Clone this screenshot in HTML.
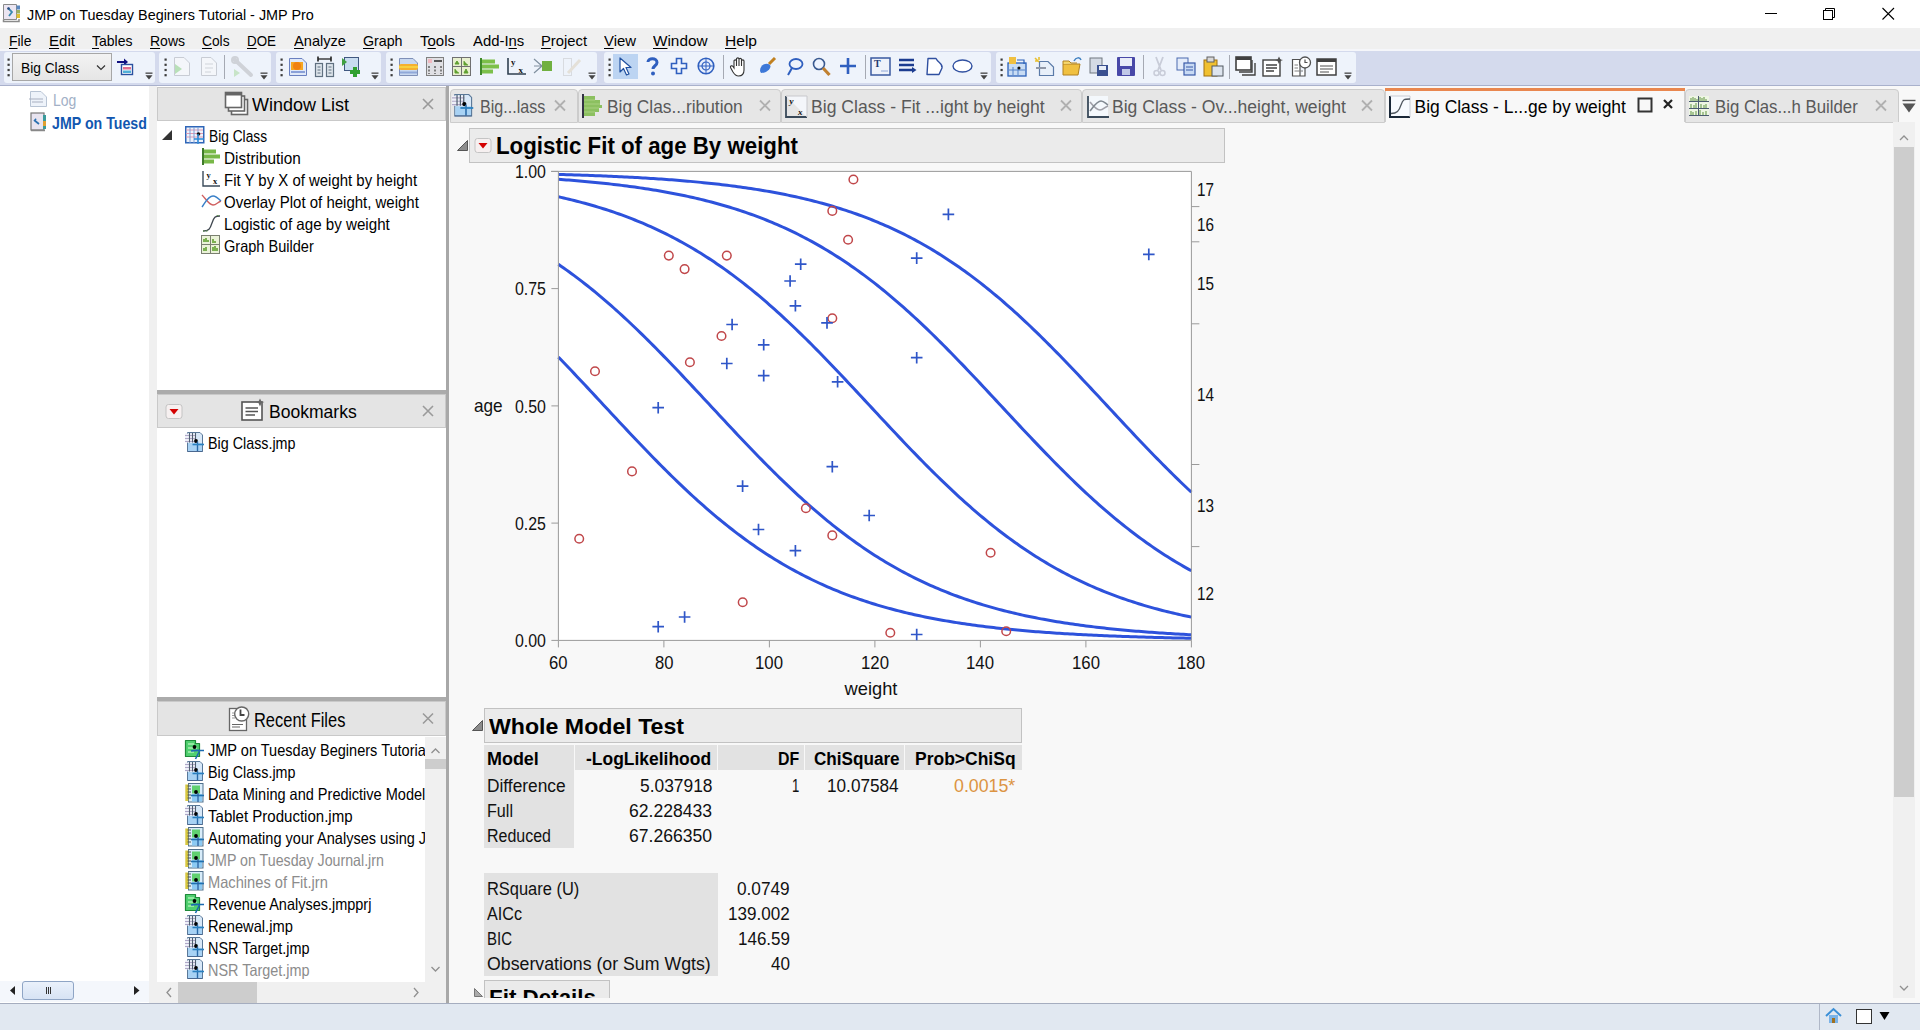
<!DOCTYPE html><html><head><meta charset="utf-8"><style>
html,body{margin:0;padding:0;}
body{width:1920px;height:1030px;position:relative;overflow:hidden;background:#f8f8f8;font-family:"Liberation Sans",sans-serif;}
.t{position:absolute;white-space:nowrap;line-height:normal;transform-origin:0 0;font-family:"Liberation Sans",sans-serif;}
.t u{text-decoration:underline;text-underline-offset:2px;text-decoration-thickness:1px;}
svg{position:absolute;overflow:visible;}
</style></head><body>
<div style="position:absolute;left:0px;top:0px;width:1920px;height:28px;background:#fff;"></div>
<div class="t" style="left:27.00px;top:5.92px;font-size:15.55px;color:#000;transform:scaleX(0.9265);">JMP on Tuesday Beginers Tutorial - JMP Pro</div>
<svg style="left:0;top:0" width="1920" height="28"><line x1="1765" y1="13.5" x2="1777" y2="13.5" stroke="#000" stroke-width="1"/><rect x="1823.5" y="10.5" width="9" height="9" fill="none" stroke="#000" stroke-width="1"/><path d="M1825.5 10.5 V8.5 H1834.5 V17.5 H1832.5" fill="none" stroke="#000" stroke-width="1"/><path d="M1882.5 8 L1894 19.5 M1894 8 L1882.5 19.5" stroke="#000" stroke-width="1.1"/></svg>
<svg style="left:0;top:0" width="24" height="24"><path d="M3.5 4.5 H16.5 V19.5 H3.5 Z" fill="#ece6f2" stroke="#8a8a8a" stroke-width="1"/><path d="M3.5 19.5 V21.5 H19 V19" fill="none" stroke="#8a8a8a" stroke-width="1.5"/><rect x="16.5" y="5.5" width="3.5" height="4" fill="#5a88c0"/><rect x="16.5" y="10" width="3.5" height="3.5" fill="#9ab060"/><rect x="16.5" y="14" width="3.5" height="4" fill="#e0c030"/><path d="M8 8 L12 12 L9 16" stroke="#3a8ab0" stroke-width="1.8" fill="none"/><circle cx="8.5" cy="8.5" r="1.3" fill="#2a4a80"/></svg>
<div style="position:absolute;left:0px;top:28px;width:1920px;height:23px;background:#f0f0f0;"></div>
<div style="position:absolute;left:0px;top:49px;width:1920px;height:2px;background:#f5f6fa;"></div>
<div class="t" style="left:9.30px;top:32.22px;font-size:15.55px;color:#000;transform:scaleX(0.8958);"><u>F</u>ile</div>
<div class="t" style="left:49.00px;top:32.22px;font-size:15.55px;color:#000;transform:scaleX(0.9701);"><u>E</u>dit</div>
<div class="t" style="left:92.00px;top:32.22px;font-size:15.55px;color:#000;transform:scaleX(0.9008);"><u>T</u>ables</div>
<div class="t" style="left:150.00px;top:32.22px;font-size:15.55px;color:#000;transform:scaleX(0.9000);"><u>R</u>ows</div>
<div class="t" style="left:202.00px;top:32.22px;font-size:15.55px;color:#000;transform:scaleX(0.8839);"><u>C</u>ols</div>
<div class="t" style="left:247.00px;top:32.22px;font-size:15.55px;color:#000;transform:scaleX(0.8605);"><u>D</u>OE</div>
<div class="t" style="left:294.00px;top:32.22px;font-size:15.55px;color:#000;transform:scaleX(0.9398);"><u>A</u>nalyze</div>
<div class="t" style="left:363.00px;top:32.22px;font-size:15.55px;color:#000;transform:scaleX(0.9138);"><u>G</u>raph</div>
<div class="t" style="left:420.00px;top:32.22px;font-size:15.55px;color:#000;transform:scaleX(0.9640);">T<u>o</u>ols</div>
<div class="t" style="left:472.70px;top:32.22px;font-size:15.55px;color:#000;transform:scaleX(0.9571);">Add-I<u>n</u>s</div>
<div class="t" style="left:541.00px;top:32.22px;font-size:15.55px;color:#000;transform:scaleX(0.9503);"><u>P</u>roject</div>
<div class="t" style="left:604.00px;top:32.22px;font-size:15.55px;color:#000;transform:scaleX(0.9572);"><u>V</u>iew</div>
<div class="t" style="left:653.00px;top:32.22px;font-size:15.55px;color:#000;transform:scaleX(0.9852);"><u>W</u>indow</div>
<div class="t" style="left:725.00px;top:32.22px;font-size:15.55px;color:#000;"><u>H</u>elp</div>
<div style="position:absolute;left:0px;top:51px;width:1920px;height:34px;background:#d4daed;"></div>
<div style="position:absolute;left:0px;top:85px;width:1920px;height:1px;background:#a9b1cc;"></div>
<div style="position:absolute;left:4px;top:52px;width:151px;height:31px;background:#eef3fb;border-radius:3px;"></div>
<div style="position:absolute;left:159px;top:52px;width:112px;height:31px;background:#eef3fb;border-radius:3px;"></div>
<div style="position:absolute;left:276px;top:52px;width:105px;height:31px;background:#eef3fb;border-radius:3px;"></div>
<div style="position:absolute;left:386px;top:52px;width:211px;height:31px;background:#eef3fb;border-radius:3px;"></div>
<div style="position:absolute;left:604px;top:52px;width:387px;height:31px;background:#eef3fb;border-radius:3px;"></div>
<div style="position:absolute;left:996px;top:52px;width:360px;height:31px;background:#eef3fb;border-radius:3px;"></div>
<div style="position:absolute;left:0px;top:86px;width:149px;height:917px;background:#fff;"></div>
<div style="position:absolute;left:149px;top:86px;width:8px;height:917px;background:#f0f0f0;"></div>
<div class="t" style="left:52.70px;top:90.87px;font-size:16.28px;color:#a2b0c6;transform:scaleX(0.8578);">Log</div>
<div class="t" style="left:52.00px;top:112.88px;font-size:17.15px;color:#1257b0;font-weight:bold;transform:scaleX(0.8284);">JMP on Tuesd</div>
<div style="position:absolute;left:0px;top:981px;width:149px;height:21px;background:#f4f7fc;"></div>
<div style="position:absolute;left:22px;top:981px;width:52px;height:19px;background:linear-gradient(#eaf1fb,#d7e3f4);border:1px solid #8fa5c5;border-radius:3px;box-sizing:border-box;"></div>
<svg style="left:0;top:980" width="149" height="22"><path d="M10 10.5 L15 6 L15 15 Z" fill="#222"/><path d="M139.5 10.5 L134 6 L134 15 Z" fill="#222"/><path d="M46.5 7 V14 M48.5 7 V14 M50.5 7 V14" stroke="#333" stroke-width="1"/></svg>
<div style="position:absolute;left:446px;top:86px;width:3px;height:917px;background:#a8a8a8;"></div>
<div style="position:absolute;left:157px;top:86px;width:289px;height:305px;background:#fff;"></div>
<div style="position:absolute;left:157px;top:87px;width:289px;height:34px;background:#e4e4e4;border:1px solid #c9c9c9;box-sizing:border-box;"></div>
<div class="t" style="left:252.00px;top:93.96px;font-size:18.60px;color:#000;transform:scaleX(0.9672);">Window List</div>
<svg style="left:420px;top:87px" width="20" height="34"><path d="M3 12.0 L13 22.0 M13 12.0 L3 22.0" stroke="#9a9a9a" stroke-width="1.6"/></svg>
<div class="t" style="left:208.60px;top:127.14px;font-size:16.42px;color:#000;transform:scaleX(0.8375);">Big Class</div>
<div class="t" style="left:223.80px;top:149.27px;font-size:16.28px;color:#000;transform:scaleX(0.9444);">Distribution</div>
<div class="t" style="left:223.80px;top:171.27px;font-size:16.28px;color:#000;transform:scaleX(0.9189);">Fit Y by X of weight by height</div>
<div class="t" style="left:223.80px;top:193.27px;font-size:16.28px;color:#000;transform:scaleX(0.9209);">Overlay Plot of height, weight</div>
<div class="t" style="left:223.80px;top:215.27px;font-size:16.28px;color:#000;transform:scaleX(0.9306);">Logistic of age by weight</div>
<div class="t" style="left:223.80px;top:237.27px;font-size:16.28px;color:#000;transform:scaleX(0.8940);">Graph Builder</div>
<svg style="left:160px;top:128px" width="14" height="14"><path d="M2 12 L12 12 L12 2 Z" fill="#333"/></svg>
<div style="position:absolute;left:157px;top:390px;width:289px;height:4px;background:#ababab;"></div>
<div style="position:absolute;left:157px;top:394px;width:289px;height:309px;background:#fff;"></div>
<div style="position:absolute;left:157px;top:394px;width:289px;height:34px;background:#e4e4e4;border:1px solid #c9c9c9;box-sizing:border-box;"></div>
<div class="t" style="left:269.00px;top:400.90px;font-size:18.90px;color:#000;transform:scaleX(0.9280);">Bookmarks</div>
<svg style="left:420px;top:394px" width="20" height="34"><path d="M3 12.0 L13 22.0 M13 12.0 L3 22.0" stroke="#9a9a9a" stroke-width="1.6"/></svg>
<svg style="left:164px;top:403px" width="22" height="18"><rect x="2" y="1.5" width="16" height="14" rx="2.5" fill="#f6f0f0" stroke="#c4c4c4" stroke-width="1"/><path d="M5.5 6 L14.5 6 L10 11.5 Z" fill="#d40000"/></svg>
<div class="t" style="left:208.30px;top:435.33px;font-size:15.99px;color:#000;transform:scaleX(0.8952);">Big Class.jmp</div>
<div style="position:absolute;left:157px;top:697px;width:289px;height:4px;background:#ababab;"></div>
<div style="position:absolute;left:157px;top:701px;width:289px;height:302px;background:#fff;"></div>
<div style="position:absolute;left:157px;top:701px;width:289px;height:35px;background:#e4e4e4;border:1px solid #c9c9c9;box-sizing:border-box;"></div>
<div class="t" style="left:254.00px;top:709.50px;font-size:19.33px;color:#000;transform:scaleX(0.8507);">Recent Files</div>
<svg style="left:420px;top:701px" width="20" height="35"><path d="M3 12.5 L13 22.5 M13 12.5 L3 22.5" stroke="#9a9a9a" stroke-width="1.6"/></svg>
<div style="position:absolute;left:157px;top:737px;width:268px;height:245px;overflow:hidden;">
<div class="t" style="left:50.70px;top:3.87px;font-size:16.72px;color:#000;transform:scaleX(0.8700);">JMP on Tuesday Beginers Tutorial.jrn</div>
<div class="t" style="left:50.70px;top:25.87px;font-size:16.72px;color:#000;transform:scaleX(0.8563);">Big Class.jmp</div>
<div class="t" style="left:50.70px;top:47.87px;font-size:16.72px;color:#000;transform:scaleX(0.8700);">Data Mining and Predictive Modeling.jrn</div>
<div class="t" style="left:50.70px;top:69.87px;font-size:16.72px;color:#000;transform:scaleX(0.9002);">Tablet Production.jmp</div>
<div class="t" style="left:50.70px;top:91.87px;font-size:16.72px;color:#000;transform:scaleX(0.8700);">Automating your Analyses using JSL.jrn</div>
<div class="t" style="left:50.70px;top:113.87px;font-size:16.72px;color:#8c8c8c;transform:scaleX(0.8507);">JMP on Tuesday Journal.jrn</div>
<div class="t" style="left:50.70px;top:135.87px;font-size:16.72px;color:#8c8c8c;transform:scaleX(0.8780);">Machines of Fit.jrn</div>
<div class="t" style="left:50.70px;top:157.87px;font-size:16.72px;color:#000;transform:scaleX(0.8668);">Revenue Analyses.jmpprj</div>
<div class="t" style="left:50.70px;top:179.87px;font-size:16.72px;color:#000;transform:scaleX(0.8787);">Renewal.jmp</div>
<div class="t" style="left:50.70px;top:201.87px;font-size:16.72px;color:#000;transform:scaleX(0.8643);">NSR Target.jmp</div>
<div class="t" style="left:50.70px;top:223.87px;font-size:16.72px;color:#8c8c8c;transform:scaleX(0.8643);">NSR Target.jmp</div>
</div>
<div style="position:absolute;left:425px;top:737px;width:21px;height:245px;background:#f0f0f0;"></div>
<div style="position:absolute;left:425px;top:759px;width:21px;height:10px;background:#cdcdcd;"></div>
<svg style="left:425px;top:737px" width="21" height="245"><path d="M6.5 16 L10.5 12 L14.5 16" stroke="#909090" stroke-width="1.3" fill="none"/><path d="M6.5 230 L10.5 234 L14.5 230" stroke="#909090" stroke-width="1.3" fill="none"/></svg>
<div style="position:absolute;left:157px;top:982px;width:289px;height:21px;background:#f0f0f0;"></div>
<div style="position:absolute;left:178px;top:982px;width:79px;height:21px;background:#cdcdcd;"></div>
<svg style="left:157px;top:982px" width="289" height="21"><path d="M14 6 L10 10.5 L14 15" stroke="#909090" stroke-width="1.3" fill="none"/><path d="M257 6 L261 10.5 L257 15" stroke="#909090" stroke-width="1.3" fill="none"/></svg>
<div style="position:absolute;left:449px;top:86px;width:1471px;height:36px;background:#f8f8f8;"></div>
<div style="position:absolute;left:450px;top:89px;width:128px;height:34px;background:#e6e6e6;border:1px solid #cccccc;border-radius:4px 4px 0 0;box-sizing:border-box;"></div>
<div class="t" style="left:479.50px;top:96.91px;font-size:17.44px;color:#595959;transform:scaleX(0.9228);">Big...lass</div>
<svg style="left:553px;top:90px" width="16" height="30"><path d="M2 10.5 L12 20.5 M12 10.5 L2 20.5" stroke="#b0b0b0" stroke-width="1.8"/></svg>
<div style="position:absolute;left:578px;top:89px;width:203px;height:34px;background:#e6e6e6;border:1px solid #cccccc;border-radius:4px 4px 0 0;box-sizing:border-box;"></div>
<div class="t" style="left:606.70px;top:96.91px;font-size:17.44px;color:#595959;transform:scaleX(0.9934);">Big Clas...ribution</div>
<svg style="left:758px;top:90px" width="16" height="30"><path d="M2 10.5 L12 20.5 M12 10.5 L2 20.5" stroke="#b0b0b0" stroke-width="1.8"/></svg>
<div style="position:absolute;left:781px;top:89px;width:301px;height:34px;background:#e6e6e6;border:1px solid #cccccc;border-radius:4px 4px 0 0;box-sizing:border-box;"></div>
<div class="t" style="left:810.60px;top:96.91px;font-size:17.44px;color:#595959;transform:scaleX(1.0087);">Big Class - Fit ...ight by height</div>
<svg style="left:1059px;top:90px" width="16" height="30"><path d="M2 10.5 L12 20.5 M12 10.5 L2 20.5" stroke="#b0b0b0" stroke-width="1.8"/></svg>
<div style="position:absolute;left:1082px;top:89px;width:303px;height:34px;background:#e6e6e6;border:1px solid #cccccc;border-radius:4px 4px 0 0;box-sizing:border-box;"></div>
<div class="t" style="left:1111.50px;top:96.91px;font-size:17.44px;color:#595959;transform:scaleX(1.0072);">Big Class - Ov...height, weight</div>
<svg style="left:1360px;top:90px" width="16" height="30"><path d="M2 10.5 L12 20.5 M12 10.5 L2 20.5" stroke="#b0b0b0" stroke-width="1.8"/></svg>
<div style="position:absolute;left:1385px;top:88px;width:300px;height:34px;background:#f8f8f8;border-left:1px solid #cfcfcf;border-right:1px solid #cfcfcf;box-sizing:border-box;"></div>
<div style="position:absolute;left:1385px;top:88px;width:300px;height:3px;background:#e9874f;"></div>
<div class="t" style="left:1414.60px;top:96.91px;font-size:17.44px;color:#000;">Big Class - L...ge by weight</div>
<svg style="left:1630px;top:90px" width="50" height="30"><rect x="8.5" y="8.5" width="13" height="13" fill="none" stroke="#333" stroke-width="2"/><path d="M34 10 L42 18 M42 10 L34 18" stroke="#222" stroke-width="2.2"/></svg>
<div style="position:absolute;left:1685px;top:89px;width:214px;height:34px;background:#e6e6e6;border:1px solid #cccccc;border-radius:4px 4px 0 0;box-sizing:border-box;"></div>
<div class="t" style="left:1715.00px;top:96.91px;font-size:17.44px;color:#595959;transform:scaleX(0.9627);">Big Clas...h Builder</div>
<svg style="left:1874px;top:90px" width="16" height="30"><path d="M2 10.5 L12 20.5 M12 10.5 L2 20.5" stroke="#b0b0b0" stroke-width="1.8"/></svg>
<svg style="left:1900px;top:98px" width="18" height="18"><path d="M2.5 2.5 H15.5" stroke="#555" stroke-width="1.4"/><path d="M2.5 5.5 H15.5 L9 14.5 Z" fill="#555"/></svg>
<div style="position:absolute;left:1893px;top:122px;width:22px;height:876px;background:#f0f0f0;"></div>
<div style="position:absolute;left:1894px;top:147px;width:20px;height:650px;background:#cdcdcd;"></div>
<svg style="left:1893px;top:122px" width="22" height="876"><path d="M7 18 L11 14 L15 18" stroke="#909090" stroke-width="1.3" fill="none"/><path d="M7 864 L11 868 L15 864" stroke="#909090" stroke-width="1.3" fill="none"/></svg>
<div style="position:absolute;left:469px;top:128px;width:756px;height:35px;background:#ebebeb;border:1px solid #c2c2c2;box-sizing:border-box;"></div>
<svg style="left:450px;top:130px" width="50" height="30"><path d="M7.5 20.5 L17.5 20.5 L17.5 10.5 Z" fill="#8c8c8c" stroke="#555" stroke-width="1" stroke-linejoin="round"/><rect x="25" y="8.5" width="16" height="14" rx="2.5" fill="#f6f0f0" stroke="#c4c4c4" stroke-width="1"/><path d="M28.5 13 L37.5 13 L33 18.5 Z" fill="#d40000"/></svg>
<div class="t" style="left:496.00px;top:133.38px;font-size:23.11px;color:#000;font-weight:bold;transform:scaleX(0.9639);">Logistic Fit of age By weight</div>
<div style="position:absolute;left:558px;top:171px;width:634px;height:470px;background:#fff;"></div>
<svg style="left:0;top:0" width="1920" height="1030"><g fill="none" stroke="#2d52dc" stroke-width="3" stroke-linejoin="round"><polyline points="558.40,357.11 561.04,359.83 563.67,362.57 566.31,365.31 568.95,368.07 571.59,370.84 574.23,373.62 576.86,376.41 579.50,379.21 582.14,382.02 584.77,384.83 587.41,387.65 590.05,390.47 592.69,393.30 595.32,396.14 597.96,398.97 600.60,401.81 603.24,404.65 605.88,407.49 608.51,410.32 611.15,413.16 613.79,416.00 616.42,418.83 619.06,421.66 621.70,424.48 624.34,427.30 626.98,430.11 629.61,432.92 632.25,435.71 634.89,438.50 637.52,441.28 640.16,444.05 642.80,446.81 645.44,449.55 648.08,452.29 650.71,455.01 653.35,457.72 655.99,460.41 658.62,463.09 661.26,465.75 663.90,468.40 666.54,471.02 669.17,473.64 671.81,476.23 674.45,478.80 677.09,481.36 679.73,483.89 682.36,486.41 685.00,488.90 687.64,491.37 690.27,493.82 692.91,496.25 695.55,498.66 698.19,501.04 700.83,503.40 703.46,505.74 706.10,508.05 708.74,510.34 711.38,512.60 714.01,514.84 716.65,517.06 719.29,519.24 721.92,521.41 724.56,523.54 727.20,525.66 729.84,527.74 732.48,529.80 735.11,531.83 737.75,533.84 740.39,535.82 743.02,537.78 745.66,539.70 748.30,541.61 750.94,543.48 753.58,545.33 756.21,547.15 758.85,548.95 761.49,550.72 764.12,552.46 766.76,554.18 769.40,555.87 772.04,557.53 774.67,559.17 777.31,560.78 779.95,562.37 782.59,563.93 785.23,565.47 787.86,566.98 790.50,568.47 793.14,569.93 795.77,571.37 798.41,572.78 801.05,574.17 803.69,575.54 806.33,576.88 808.96,578.20 811.60,579.49 814.24,580.76 816.88,582.01 819.51,583.24 822.15,584.44 824.79,585.63 827.42,586.79 830.06,587.92 832.70,589.04 835.34,590.14 837.98,591.22 840.61,592.27 843.25,593.31 845.89,594.32 848.53,595.32 851.16,596.30 853.80,597.25 856.44,598.19 859.08,599.11 861.71,600.02 864.35,600.90 866.99,601.77 869.62,602.62 872.26,603.45 874.90,604.27 877.54,605.07 880.17,605.85 882.81,606.62 885.45,607.37 888.09,608.10 890.73,608.82 893.36,609.53 896.00,610.22 898.64,610.90 901.28,611.56 903.91,612.21 906.55,612.84 909.19,613.46 911.83,614.07 914.46,614.67 917.10,615.25 919.74,615.82 922.38,616.38 925.01,616.92 927.65,617.46 930.29,617.98 932.92,618.49 935.56,618.99 938.20,619.48 940.84,619.96 943.48,620.43 946.11,620.89 948.75,621.33 951.39,621.77 954.03,622.20 956.66,622.62 959.30,623.03 961.94,623.43 964.58,623.82 967.21,624.20 969.85,624.58 972.49,624.94 975.12,625.30 977.76,625.65 980.40,625.99 983.04,626.33 985.67,626.65 988.31,626.97 990.95,627.29 993.59,627.59 996.23,627.89 998.86,628.18 1001.50,628.47 1004.14,628.74 1006.78,629.02 1009.41,629.28 1012.05,629.54 1014.69,629.80 1017.33,630.04 1019.96,630.29 1022.60,630.52 1025.24,630.75 1027.88,630.98 1030.51,631.20 1033.15,631.42 1035.79,631.63 1038.42,631.83 1041.06,632.04 1043.70,632.23 1046.34,632.42 1048.97,632.61 1051.61,632.80 1054.25,632.97 1056.89,633.15 1059.53,633.32 1062.16,633.49 1064.80,633.65 1067.44,633.81 1070.08,633.96 1072.71,634.12 1075.35,634.26 1077.99,634.41 1080.62,634.55 1083.26,634.69 1085.90,634.82 1088.54,634.96 1091.18,635.08 1093.81,635.21 1096.45,635.33 1099.09,635.45 1101.73,635.57 1104.36,635.68 1107.00,635.80 1109.64,635.91 1112.28,636.01 1114.91,636.12 1117.55,636.22 1120.19,636.32 1122.83,636.41 1125.46,636.51 1128.10,636.60 1130.74,636.69 1133.38,636.78 1136.01,636.86 1138.65,636.95 1141.29,637.03 1143.93,637.11 1146.56,637.19 1149.20,637.27 1151.84,637.34 1154.48,637.41 1157.11,637.48 1159.75,637.55 1162.39,637.62 1165.03,637.69 1167.66,637.75 1170.30,637.81 1172.94,637.88 1175.58,637.94 1178.21,637.99 1180.85,638.05 1183.49,638.11 1186.12,638.16 1188.76,638.22 1191.40,638.27"/><polyline points="558.40,264.35 561.04,266.16 563.67,268.01 566.31,269.88 568.95,271.78 571.59,273.70 574.23,275.65 576.86,277.63 579.50,279.63 582.14,281.66 584.77,283.71 587.41,285.79 590.05,287.90 592.69,290.03 595.32,292.19 597.96,294.38 600.60,296.59 603.24,298.82 605.88,301.08 608.51,303.36 611.15,305.67 613.79,308.00 616.42,310.36 619.06,312.74 621.70,315.14 624.34,317.57 626.98,320.01 629.61,322.48 632.25,324.97 634.89,327.48 637.52,330.02 640.16,332.57 642.80,335.14 645.44,337.73 648.08,340.34 650.71,342.96 653.35,345.61 655.99,348.26 658.62,350.94 661.26,353.63 663.90,356.34 666.54,359.05 669.17,361.79 671.81,364.53 674.45,367.29 677.09,370.05 679.73,372.83 682.36,375.62 685.00,378.42 687.64,381.22 690.27,384.03 692.91,386.85 695.55,389.67 698.19,392.50 700.83,395.33 703.46,398.16 706.10,401.00 708.74,403.84 711.38,406.68 714.01,409.52 716.65,412.35 719.29,415.19 721.92,418.02 724.56,420.85 727.20,423.68 729.84,426.50 732.48,429.31 735.11,432.12 737.75,434.92 740.39,437.71 743.02,440.49 745.66,443.26 748.30,446.02 750.94,448.77 753.58,451.51 756.21,454.24 758.85,456.95 761.49,459.65 764.12,462.33 766.76,464.99 769.40,467.65 772.04,470.28 774.67,472.89 777.31,475.49 779.95,478.07 782.59,480.63 785.23,483.17 787.86,485.69 790.50,488.19 793.14,490.67 795.77,493.13 798.41,495.56 801.05,497.98 803.69,500.37 806.33,502.73 808.96,505.08 811.60,507.40 814.24,509.69 816.88,511.96 819.51,514.21 822.15,516.43 824.79,518.62 827.42,520.79 830.06,522.94 832.70,525.06 835.34,527.15 837.98,529.22 840.61,531.26 843.25,533.27 845.89,535.26 848.53,537.22 851.16,539.16 853.80,541.07 856.44,542.95 859.08,544.81 861.71,546.63 864.35,548.44 866.99,550.22 869.62,551.97 872.26,553.69 874.90,555.39 877.54,557.06 880.17,558.71 882.81,560.33 885.45,561.92 888.09,563.49 890.73,565.04 893.36,566.56 896.00,568.05 898.64,569.52 901.28,570.96 903.91,572.38 906.55,573.78 909.19,575.15 911.83,576.50 914.46,577.82 917.10,579.13 919.74,580.40 922.38,581.66 925.01,582.89 927.65,584.10 930.29,585.29 932.92,586.46 935.56,587.60 938.20,588.73 940.84,589.83 943.48,590.91 946.11,591.97 948.75,593.01 951.39,594.04 954.03,595.04 956.66,596.02 959.30,596.98 961.94,597.93 964.58,598.85 967.21,599.76 969.85,600.65 972.49,601.52 975.12,602.38 977.76,603.22 980.40,604.04 983.04,604.84 985.67,605.63 988.31,606.40 990.95,607.16 993.59,607.90 996.23,608.62 998.86,609.33 1001.50,610.03 1004.14,610.71 1006.78,611.37 1009.41,612.02 1012.05,612.66 1014.69,613.29 1017.33,613.90 1019.96,614.50 1022.60,615.09 1025.24,615.66 1027.88,616.22 1030.51,616.77 1033.15,617.31 1035.79,617.83 1038.42,618.35 1041.06,618.85 1043.70,619.34 1046.34,619.82 1048.97,620.30 1051.61,620.76 1054.25,621.21 1056.89,621.65 1059.53,622.08 1062.16,622.50 1064.80,622.91 1067.44,623.32 1070.08,623.71 1072.71,624.10 1075.35,624.47 1077.99,624.84 1080.62,625.20 1083.26,625.55 1085.90,625.90 1088.54,626.23 1091.18,626.56 1093.81,626.88 1096.45,627.20 1099.09,627.51 1101.73,627.81 1104.36,628.10 1107.00,628.39 1109.64,628.67 1112.28,628.94 1114.91,629.21 1117.55,629.47 1120.19,629.72 1122.83,629.97 1125.46,630.22 1128.10,630.46 1130.74,630.69 1133.38,630.92 1136.01,631.14 1138.65,631.36 1141.29,631.57 1143.93,631.78 1146.56,631.98 1149.20,632.18 1151.84,632.37 1154.48,632.56 1157.11,632.74 1159.75,632.92 1162.39,633.10 1165.03,633.27 1167.66,633.44 1170.30,633.60 1172.94,633.76 1175.58,633.92 1178.21,634.07 1180.85,634.22 1183.49,634.37 1186.12,634.51 1188.76,634.65 1191.40,634.79"/><polyline points="558.40,196.80 561.04,197.39 563.67,197.99 566.31,198.61 568.95,199.23 571.59,199.87 574.23,200.53 576.86,201.20 579.50,201.88 582.14,202.58 584.77,203.29 587.41,204.02 590.05,204.76 592.69,205.52 595.32,206.29 597.96,207.08 600.60,207.89 603.24,208.71 605.88,209.55 608.51,210.41 611.15,211.28 613.79,212.18 616.42,213.09 619.06,214.01 621.70,214.96 624.34,215.93 626.98,216.91 629.61,217.92 632.25,218.94 634.89,219.99 637.52,221.05 640.16,222.14 642.80,223.24 645.44,224.37 648.08,225.52 650.71,226.69 653.35,227.88 655.99,229.09 658.62,230.33 661.26,231.59 663.90,232.87 666.54,234.18 669.17,235.50 671.81,236.86 674.45,238.23 677.09,239.63 679.73,241.06 682.36,242.50 685.00,243.98 687.64,245.47 690.27,247.00 692.91,248.55 695.55,250.12 698.19,251.72 700.83,253.34 703.46,254.99 706.10,256.67 708.74,258.37 711.38,260.10 714.01,261.85 716.65,263.64 719.29,265.44 721.92,267.28 724.56,269.14 727.20,271.02 729.84,272.94 732.48,274.88 735.11,276.84 737.75,278.83 740.39,280.85 743.02,282.90 745.66,284.97 748.30,287.06 750.94,289.19 753.58,291.34 756.21,293.51 758.85,295.71 761.49,297.93 764.12,300.18 766.76,302.46 769.40,304.76 772.04,307.08 774.67,309.43 777.31,311.80 779.95,314.19 782.59,316.61 785.23,319.04 787.86,321.50 790.50,323.99 793.14,326.49 795.77,329.01 798.41,331.56 801.05,334.12 803.69,336.70 806.33,339.30 808.96,341.92 811.60,344.56 814.24,347.21 816.88,349.88 819.51,352.56 822.15,355.26 824.79,357.98 827.42,360.70 830.06,363.44 832.70,366.20 835.34,368.96 837.98,371.73 840.61,374.52 843.25,377.31 845.89,380.11 848.53,382.92 851.16,385.73 853.80,388.55 856.44,391.38 859.08,394.21 861.71,397.04 864.35,399.88 866.99,402.72 869.62,405.56 872.26,408.39 874.90,411.23 877.54,414.07 880.17,416.90 882.81,419.73 885.45,422.56 888.09,425.38 890.73,428.20 893.36,431.01 896.00,433.81 898.64,436.61 901.28,439.39 903.91,442.17 906.55,444.93 909.19,447.69 911.83,450.43 914.46,453.16 917.10,455.88 919.74,458.58 922.38,461.27 925.01,463.94 927.65,466.60 930.29,469.24 932.92,471.86 935.56,474.47 938.20,477.05 940.84,479.62 943.48,482.17 946.11,484.70 948.75,487.21 951.39,489.70 954.03,492.16 956.66,494.60 959.30,497.03 961.94,499.42 964.58,501.80 967.21,504.15 969.85,506.48 972.49,508.79 975.12,511.07 977.76,513.32 980.40,515.55 983.04,517.76 985.67,519.94 988.31,522.09 990.95,524.22 993.59,526.33 996.23,528.40 998.86,530.45 1001.50,532.48 1004.14,534.48 1006.78,536.45 1009.41,538.40 1012.05,540.32 1014.69,542.21 1017.33,544.07 1019.96,545.91 1022.60,547.73 1025.24,549.52 1027.88,551.28 1030.51,553.01 1033.15,554.72 1035.79,556.40 1038.42,558.06 1041.06,559.69 1043.70,561.30 1046.34,562.87 1048.97,564.43 1051.61,565.96 1054.25,567.46 1056.89,568.94 1059.53,570.39 1062.16,571.82 1064.80,573.23 1067.44,574.61 1070.08,575.97 1072.71,577.30 1075.35,578.61 1077.99,579.90 1080.62,581.17 1083.26,582.41 1085.90,583.63 1088.54,584.82 1091.18,586.00 1093.81,587.15 1096.45,588.29 1099.09,589.40 1101.73,590.49 1104.36,591.56 1107.00,592.61 1109.64,593.63 1112.28,594.64 1114.91,595.63 1117.55,596.61 1120.19,597.56 1122.83,598.49 1125.46,599.41 1128.10,600.30 1130.74,601.18 1133.38,602.04 1136.01,602.89 1138.65,603.71 1141.29,604.52 1143.93,605.32 1146.56,606.10 1149.20,606.86 1151.84,607.60 1154.48,608.34 1157.11,609.05 1159.75,609.75 1162.39,610.44 1165.03,611.11 1167.66,611.77 1170.30,612.41 1172.94,613.04 1175.58,613.66 1178.21,614.26 1180.85,614.86 1183.49,615.43 1186.12,616.00 1188.76,616.55 1191.40,617.10"/><polyline points="558.40,179.32 561.04,179.51 563.67,179.70 566.31,179.90 568.95,180.11 571.59,180.32 574.23,180.53 576.86,180.75 579.50,180.98 582.14,181.21 584.77,181.44 587.41,181.68 590.05,181.93 592.69,182.18 595.32,182.44 597.96,182.70 600.60,182.97 603.24,183.25 605.88,183.53 608.51,183.82 611.15,184.12 613.79,184.42 616.42,184.73 619.06,185.05 621.70,185.37 624.34,185.70 626.98,186.04 629.61,186.39 632.25,186.75 634.89,187.11 637.52,187.48 640.16,187.86 642.80,188.25 645.44,188.65 648.08,189.06 650.71,189.47 653.35,189.90 655.99,190.33 658.62,190.78 661.26,191.23 663.90,191.70 666.54,192.17 669.17,192.66 671.81,193.16 674.45,193.66 677.09,194.18 679.73,194.71 682.36,195.26 685.00,195.81 687.64,196.38 690.27,196.95 692.91,197.55 695.55,198.15 698.19,198.77 700.83,199.40 703.46,200.04 706.10,200.70 708.74,201.37 711.38,202.06 714.01,202.76 716.65,203.48 719.29,204.21 721.92,204.95 724.56,205.72 727.20,206.49 729.84,207.29 732.48,208.10 735.11,208.93 737.75,209.77 740.39,210.63 743.02,211.51 745.66,212.41 748.30,213.33 750.94,214.26 753.58,215.21 756.21,216.18 758.85,217.17 761.49,218.18 764.12,219.21 766.76,220.26 769.40,221.33 772.04,222.42 774.67,223.53 777.31,224.67 779.95,225.82 782.59,227.00 785.23,228.19 787.86,229.41 790.50,230.66 793.14,231.92 795.77,233.21 798.41,234.52 801.05,235.85 803.69,237.21 806.33,238.59 808.96,240.00 811.60,241.43 814.24,242.88 816.88,244.36 819.51,245.87 822.15,247.40 824.79,248.95 827.42,250.53 830.06,252.14 832.70,253.77 835.34,255.43 837.98,257.11 840.61,258.82 843.25,260.55 845.89,262.31 848.53,264.10 851.16,265.92 853.80,267.76 856.44,269.62 859.08,271.52 861.71,273.44 864.35,275.38 866.99,277.36 869.62,279.36 872.26,281.38 874.90,283.43 877.54,285.51 880.17,287.61 882.81,289.74 885.45,291.90 888.09,294.08 890.73,296.28 893.36,298.52 896.00,300.77 898.64,303.05 901.28,305.36 903.91,307.69 906.55,310.04 909.19,312.42 911.83,314.82 914.46,317.24 917.10,319.68 919.74,322.15 922.38,324.63 925.01,327.14 927.65,329.67 930.29,332.22 932.92,334.79 935.56,337.38 938.20,339.98 940.84,342.61 943.48,345.25 946.11,347.90 948.75,350.58 951.39,353.26 954.03,355.97 956.66,358.69 959.30,361.42 961.94,364.16 964.58,366.91 967.21,369.68 969.85,372.46 972.49,375.24 975.12,378.04 977.76,380.84 980.40,383.65 983.04,386.47 985.67,389.29 988.31,392.11 990.95,394.95 993.59,397.78 996.23,400.62 998.86,403.45 1001.50,406.29 1004.14,409.13 1006.78,411.97 1009.41,414.81 1012.05,417.64 1014.69,420.47 1017.33,423.29 1019.96,426.12 1022.60,428.93 1025.24,431.74 1027.88,434.54 1030.51,437.33 1033.15,440.11 1035.79,442.89 1038.42,445.65 1041.06,448.40 1043.70,451.14 1046.34,453.87 1048.97,456.58 1051.61,459.28 1054.25,461.97 1056.89,464.63 1059.53,467.29 1062.16,469.92 1064.80,472.54 1067.44,475.14 1070.08,477.72 1072.71,480.29 1075.35,482.83 1077.99,485.35 1080.62,487.86 1083.26,490.34 1085.90,492.80 1088.54,495.24 1091.18,497.65 1093.81,500.04 1096.45,502.41 1099.09,504.76 1101.73,507.08 1104.36,509.38 1107.00,511.66 1109.64,513.90 1112.28,516.13 1114.91,518.33 1117.55,520.50 1120.19,522.65 1122.83,524.77 1125.46,526.87 1128.10,528.94 1130.74,530.98 1133.38,533.00 1136.01,534.99 1138.65,536.96 1141.29,538.90 1143.93,540.81 1146.56,542.70 1149.20,544.56 1151.84,546.39 1154.48,548.20 1157.11,549.98 1159.75,551.73 1162.39,553.46 1165.03,555.16 1167.66,556.84 1170.30,558.49 1172.94,560.11 1175.58,561.71 1178.21,563.28 1180.85,564.83 1183.49,566.35 1186.12,567.85 1188.76,569.32 1191.40,570.77"/><polyline points="558.40,174.42 561.04,174.49 563.67,174.57 566.31,174.65 568.95,174.73 571.59,174.81 574.23,174.89 576.86,174.97 579.50,175.06 582.14,175.15 584.77,175.24 587.41,175.33 590.05,175.43 592.69,175.53 595.32,175.63 597.96,175.73 600.60,175.84 603.24,175.94 605.88,176.05 608.51,176.17 611.15,176.28 613.79,176.40 616.42,176.52 619.06,176.65 621.70,176.77 624.34,176.90 626.98,177.04 629.61,177.17 632.25,177.31 634.89,177.46 637.52,177.60 640.16,177.75 642.80,177.91 645.44,178.06 648.08,178.22 650.71,178.39 653.35,178.56 655.99,178.73 658.62,178.91 661.26,179.09 663.90,179.27 666.54,179.46 669.17,179.66 671.81,179.86 674.45,180.06 677.09,180.27 679.73,180.48 682.36,180.70 685.00,180.92 687.64,181.15 690.27,181.38 692.91,181.62 695.55,181.87 698.19,182.12 700.83,182.38 703.46,182.64 706.10,182.91 708.74,183.18 711.38,183.46 714.01,183.75 716.65,184.05 719.29,184.35 721.92,184.65 724.56,184.97 727.20,185.29 729.84,185.62 732.48,185.96 735.11,186.31 737.75,186.66 740.39,187.02 743.02,187.39 745.66,187.77 748.30,188.16 750.94,188.55 753.58,188.96 756.21,189.37 758.85,189.79 761.49,190.23 764.12,190.67 766.76,191.12 769.40,191.58 772.04,192.06 774.67,192.54 777.31,193.03 779.95,193.54 782.59,194.06 785.23,194.58 787.86,195.12 790.50,195.67 793.14,196.24 795.77,196.81 798.41,197.40 801.05,198.00 803.69,198.62 806.33,199.24 808.96,199.89 811.60,200.54 814.24,201.21 816.88,201.89 819.51,202.59 822.15,203.30 824.79,204.03 827.42,204.77 830.06,205.53 832.70,206.31 835.34,207.10 837.98,207.90 840.61,208.73 843.25,209.57 845.89,210.42 848.53,211.30 851.16,212.19 853.80,213.10 856.44,214.03 859.08,214.98 861.71,215.95 864.35,216.93 866.99,217.94 869.62,218.96 872.26,220.01 874.90,221.07 877.54,222.16 880.17,223.26 882.81,224.39 885.45,225.54 888.09,226.71 890.73,227.90 893.36,229.12 896.00,230.35 898.64,231.61 901.28,232.90 903.91,234.20 906.55,235.53 909.19,236.88 911.83,238.26 914.46,239.66 917.10,241.08 919.74,242.53 922.38,244.00 925.01,245.50 927.65,247.03 930.29,248.57 932.92,250.15 935.56,251.75 938.20,253.37 940.84,255.02 943.48,256.70 946.11,258.40 948.75,260.13 951.39,261.89 954.03,263.67 956.66,265.48 959.30,267.31 961.94,269.17 964.58,271.06 967.21,272.97 969.85,274.91 972.49,276.88 975.12,278.87 977.76,280.89 980.40,282.93 983.04,285.01 985.67,287.10 988.31,289.23 990.95,291.38 993.59,293.55 996.23,295.75 998.86,297.97 1001.50,300.22 1004.14,302.50 1006.78,304.80 1009.41,307.12 1012.05,309.47 1014.69,311.84 1017.33,314.23 1019.96,316.65 1022.60,319.09 1025.24,321.55 1027.88,324.03 1030.51,326.53 1033.15,329.06 1035.79,331.60 1038.42,334.17 1041.06,336.75 1043.70,339.35 1046.34,341.97 1048.97,344.61 1051.61,347.26 1054.25,349.93 1056.89,352.61 1059.53,355.31 1062.16,358.03 1064.80,360.75 1067.44,363.49 1070.08,366.25 1072.71,369.01 1075.35,371.78 1077.99,374.57 1080.62,377.36 1083.26,380.16 1085.90,382.97 1088.54,385.78 1091.18,388.60 1093.81,391.43 1096.45,394.26 1099.09,397.09 1101.73,399.93 1104.36,402.77 1107.00,405.61 1109.64,408.45 1112.28,411.28 1114.91,414.12 1117.55,416.95 1120.19,419.79 1122.83,422.61 1125.46,425.43 1128.10,428.25 1130.74,431.06 1133.38,433.86 1136.01,436.66 1138.65,439.44 1141.29,442.22 1143.93,444.98 1146.56,447.74 1149.20,450.48 1151.84,453.21 1154.48,455.93 1157.11,458.63 1159.75,461.32 1162.39,463.99 1165.03,466.65 1167.66,469.29 1170.30,471.91 1172.94,474.52 1175.58,477.10 1178.21,479.67 1180.85,482.22 1183.49,484.75 1186.12,487.25 1188.76,489.74 1191.40,492.21"/></g><path d="M551.0 171.4 H1191.4 V640.4 H558.4 V171.4" fill="none" stroke="#9a9a9a" stroke-width="1"/><path d="M551.4 640.4 H558.4 M551.4 523.1 H558.4 M551.4 405.9 H558.4 M551.4 288.6 H558.4 M551.4 171.4 H558.4 M558.4 640.4 V647.4 M663.9 640.4 V647.4 M769.4 640.4 V647.4 M874.9 640.4 V647.4 M980.4 640.4 V647.4 M1085.9 640.4 V647.4 M1191.4 640.4 V647.4 M1191.4 546.6 H1199.4 M1191.4 464.5 H1199.4 M1191.4 323.8 H1199.4 M1191.4 241.8 H1199.4 M1191.4 206.6 H1199.4" stroke="#9a9a9a" stroke-width="1"/><g fill="none" stroke="#c0474a" stroke-width="1.5"><circle cx="742.7" cy="602.2" r="4.3"/><circle cx="890.3" cy="632.7" r="4.3"/><circle cx="632" cy="471.4" r="4.3"/><circle cx="1006.2" cy="631.3" r="4.3"/><circle cx="579.2" cy="538.8" r="4.3"/><circle cx="832.3" cy="535.4" r="4.3"/><circle cx="805.9" cy="508.2" r="4.3"/><circle cx="595" cy="371.2" r="4.3"/><circle cx="668.8" cy="255.6" r="4.3"/><circle cx="721.5" cy="336" r="4.3"/><circle cx="990.6" cy="552.7" r="4.3"/><circle cx="684.6" cy="269.1" r="4.3"/><circle cx="689.9" cy="362.2" r="4.3"/><circle cx="726.8" cy="255.6" r="4.3"/><circle cx="832.3" cy="318.2" r="4.3"/><circle cx="832.3" cy="210.9" r="4.3"/><circle cx="848.1" cy="239.8" r="4.3"/><circle cx="853.4" cy="179.5" r="4.3"/></g><g stroke="#2f56c8" stroke-width="1.7"><path d="M678.8 617.0 H690.4 M684.6 611.2 V622.8"/><path d="M910.9 634.5 H922.5 M916.7 628.7 V640.3"/><path d="M652.4 626.7 H664.0 M658.2 620.9 V632.5"/><path d="M752.7 529.5 H764.3 M758.5 523.7 V535.3"/><path d="M789.6 550.7 H801.2 M795.4 544.9 V556.5"/><path d="M736.8 486.1 H748.4 M742.6 480.3 V491.9"/><path d="M652.4 407.7 H664.0 M658.2 401.9 V413.5"/><path d="M726.3 324.5 H737.9 M732.1 318.7 V330.3"/><path d="M757.9 344.8 H769.5 M763.7 339.0 V350.6"/><path d="M863.4 515.5 H875.0 M869.2 509.7 V521.3"/><path d="M721.0 363.5 H732.6 M726.8 357.7 V369.3"/><path d="M826.5 466.7 H838.1 M832.3 460.9 V472.5"/><path d="M757.9 375.6 H769.5 M763.7 369.8 V381.4"/><path d="M831.8 381.8 H843.4 M837.6 376.0 V387.6"/><path d="M910.9 357.7 H922.5 M916.7 351.9 V363.5"/><path d="M821.2 322.9 H832.8 M827.0 317.1 V328.7"/><path d="M789.6 305.8 H801.2 M795.4 300.0 V311.6"/><path d="M784.3 281.0 H795.9 M790.1 275.2 V286.8"/><path d="M794.9 264.2 H806.5 M800.7 258.4 V270.0"/><path d="M910.9 258.1 H922.5 M916.7 252.3 V263.9"/><path d="M1143.0 254.4 H1154.6 M1148.8 248.6 V260.2"/><path d="M942.6 214.4 H954.2 M948.4 208.6 V220.2"/></g></svg>
<div class="t" style="left:514.80px;top:161.03px;font-size:18.31px;color:#111;transform:scaleX(0.8697);">1.00</div>
<div class="t" style="left:514.80px;top:278.28px;font-size:18.31px;color:#111;transform:scaleX(0.8697);">0.75</div>
<div class="t" style="left:514.80px;top:395.53px;font-size:18.31px;color:#111;transform:scaleX(0.8697);">0.50</div>
<div class="t" style="left:514.80px;top:512.78px;font-size:18.31px;color:#111;transform:scaleX(0.8697);">0.25</div>
<div class="t" style="left:514.80px;top:630.03px;font-size:18.31px;color:#111;transform:scaleX(0.8697);">0.00</div>
<div class="t" style="left:474.00px;top:395.43px;font-size:18.31px;color:#111;transform:scaleX(0.9392);">age</div>
<div class="t" style="left:549.15px;top:652.06px;font-size:18.60px;color:#111;transform:scaleX(0.8939);">60</div>
<div class="t" style="left:654.65px;top:652.06px;font-size:18.60px;color:#111;transform:scaleX(0.8939);">80</div>
<div class="t" style="left:755.40px;top:652.06px;font-size:18.60px;color:#111;transform:scaleX(0.9020);">100</div>
<div class="t" style="left:860.90px;top:652.06px;font-size:18.60px;color:#111;transform:scaleX(0.9020);">120</div>
<div class="t" style="left:966.40px;top:652.06px;font-size:18.60px;color:#111;transform:scaleX(0.9020);">140</div>
<div class="t" style="left:1071.90px;top:652.06px;font-size:18.60px;color:#111;transform:scaleX(0.9020);">160</div>
<div class="t" style="left:1177.40px;top:652.06px;font-size:18.60px;color:#111;transform:scaleX(0.9020);">180</div>
<div class="t" style="left:844.50px;top:678.43px;font-size:18.31px;color:#111;">weight</div>
<div class="t" style="left:1197.00px;top:583.26px;font-size:18.60px;color:#111;transform:scaleX(0.8214);">12</div>
<div class="t" style="left:1197.00px;top:495.33px;font-size:18.60px;color:#111;transform:scaleX(0.8214);">13</div>
<div class="t" style="left:1197.00px;top:383.94px;font-size:18.60px;color:#111;transform:scaleX(0.8214);">14</div>
<div class="t" style="left:1197.00px;top:272.55px;font-size:18.60px;color:#111;transform:scaleX(0.8214);">15</div>
<div class="t" style="left:1197.00px;top:213.93px;font-size:18.60px;color:#111;transform:scaleX(0.8214);">16</div>
<div class="t" style="left:1197.00px;top:178.75px;font-size:18.60px;color:#111;transform:scaleX(0.8214);">17</div>
<div style="position:absolute;left:484px;top:708px;width:538px;height:35px;background:#ebebeb;border:1px solid #c2c2c2;box-sizing:border-box;"></div>
<svg style="left:466px;top:712px" width="20" height="24"><path d="M6.5 18.5 L16.5 18.5 L16.5 8.5 Z" fill="#8c8c8c" stroke="#555" stroke-width="1" stroke-linejoin="round"/></svg>
<div class="t" style="left:488.70px;top:713.02px;font-size:22.97px;color:#000;font-weight:bold;transform:scaleX(1.0077);">Whole Model Test</div>
<div style="position:absolute;left:484px;top:745px;width:90px;height:25px;background:#e2e2e2;"></div>
<div style="position:absolute;left:575px;top:745px;width:142px;height:25px;background:#e2e2e2;"></div>
<div style="position:absolute;left:718px;top:745px;width:86px;height:25px;background:#e2e2e2;"></div>
<div style="position:absolute;left:805px;top:745px;width:99px;height:25px;background:#e2e2e2;"></div>
<div style="position:absolute;left:905px;top:745px;width:117px;height:25px;background:#e2e2e2;"></div>
<div style="position:absolute;left:484px;top:770px;width:90px;height:78px;background:#e2e2e2;"></div>
<div class="t" style="left:487.20px;top:747.90px;font-size:18.90px;color:#000;font-weight:bold;transform:scaleX(0.9490);">Model</div>
<div class="t" style="left:586.30px;top:747.90px;font-size:18.90px;color:#000;font-weight:bold;transform:scaleX(0.9239);">-LogLikelihood</div>
<div class="t" style="left:777.80px;top:747.90px;font-size:18.90px;color:#000;font-weight:bold;transform:scaleX(0.8416);">DF</div>
<div class="t" style="left:814.00px;top:747.90px;font-size:18.90px;color:#000;font-weight:bold;transform:scaleX(0.9058);">ChiSquare</div>
<div class="t" style="left:914.70px;top:747.90px;font-size:18.90px;color:#000;font-weight:bold;transform:scaleX(0.9258);">Prob&gt;ChiSq</div>
<div class="t" style="left:487.00px;top:774.90px;font-size:18.90px;color:#111;transform:scaleX(0.9175);">Difference</div>
<div class="t" style="left:487.00px;top:800.10px;font-size:18.90px;color:#111;transform:scaleX(0.8539);">Full</div>
<div class="t" style="left:487.00px;top:824.90px;font-size:18.90px;color:#111;transform:scaleX(0.8461);">Reduced</div>
<div class="t" style="left:639.80px;top:774.90px;font-size:18.90px;color:#111;transform:scaleX(0.9199);">5.037918</div>
<div class="t" style="left:629.20px;top:800.10px;font-size:18.90px;color:#111;transform:scaleX(0.9303);">62.228433</div>
<div class="t" style="left:629.20px;top:824.90px;font-size:18.90px;color:#111;transform:scaleX(0.9303);">67.266350</div>
<div class="t" style="left:791.70px;top:774.90px;font-size:18.90px;color:#111;transform:scaleX(0.6946);">1</div>
<div class="t" style="left:827.00px;top:774.90px;font-size:18.90px;color:#111;transform:scaleX(0.9097);">10.07584</div>
<div class="t" style="left:954.00px;top:774.90px;font-size:18.90px;color:#dc9442;transform:scaleX(0.9409);">0.0015*</div>
<div style="position:absolute;left:484px;top:873px;width:234px;height:103px;background:#e2e2e2;"></div>
<div class="t" style="left:487.00px;top:877.60px;font-size:18.90px;color:#111;transform:scaleX(0.8702);">RSquare (U)</div>
<div class="t" style="left:737.30px;top:877.60px;font-size:18.90px;color:#111;transform:scaleX(0.9118);">0.0749</div>
<div class="t" style="left:487.00px;top:902.75px;font-size:18.90px;color:#111;transform:scaleX(0.8548);">AICc</div>
<div class="t" style="left:728.30px;top:902.75px;font-size:18.90px;color:#111;transform:scaleX(0.9033);">139.002</div>
<div class="t" style="left:487.00px;top:927.90px;font-size:18.90px;color:#111;transform:scaleX(0.7937);">BIC</div>
<div class="t" style="left:738.00px;top:927.90px;font-size:18.90px;color:#111;transform:scaleX(0.8997);">146.59</div>
<div class="t" style="left:487.00px;top:953.05px;font-size:18.90px;color:#111;transform:scaleX(0.9389);">Observations (or Sum Wgts)</div>
<div class="t" style="left:771.00px;top:953.05px;font-size:18.90px;color:#111;transform:scaleX(0.9040);">40</div>
<div style="position:absolute;left:460px;top:978px;width:600px;height:20px;overflow:hidden;">
<div style="position:absolute;left:24px;top:2px;width:126px;height:40px;background:#ebebeb;border:1px solid #c2c2c2;box-sizing:border-box;"></div>
<svg style="left:13px;top:9px" width="14" height="14"><path d="M1.5 1.5 L9.5 9.5 L1.5 9.5 Z" fill="#aaa" stroke="#777" stroke-width="1" stroke-linejoin="round"/></svg>
<div class="t" style="left:28.7px;top:5.72px;font-size:22.97px;font-weight:bold;transform:scaleX(0.975);">Fit Details</div>
</div>
<div style="position:absolute;left:0px;top:1003px;width:1920px;height:1px;background:#a5adbf;"></div>
<div style="position:absolute;left:0px;top:1004px;width:1920px;height:26px;background:#e1e8f1;"></div>
<div style="position:absolute;left:1819px;top:1004px;width:1px;height:26px;background:#b0b8c8;"></div>
<svg style="left:1820px;top:1004px" width="100" height="26"><path d="M6 12 L13.5 5 L21 12" stroke="#3b8fd6" stroke-width="2" fill="none"/><rect x="9" y="11" width="9" height="8" fill="#7ab3e8"/><rect x="12" y="14" width="3" height="5" fill="#a07020"/><rect x="36.5" y="5.5" width="15" height="14" fill="#fff" stroke="#333" stroke-width="1"/><path d="M59.5 8 L69.5 8 L64.5 16 Z" fill="#000"/></svg>
<div style="position:absolute;left:12px;top:53px;width:100px;height:28px;box-sizing:border-box;border:1px solid #a7a7a7;background:linear-gradient(#f3f3f3,#e6e6e6);"></div>
<div class="t" style="left:21.00px;top:59.58px;font-size:14.83px;color:#000;transform:scaleX(0.9262);">Big Class</div>
<svg style="left:96px;top:63.5px" width="10" height="8" viewBox="0 0 10 8"><path d="M1 1.5 L5 5.5 L9 1.5" stroke="#333" stroke-width="1.2" fill="none"/></svg>
<svg style="left:6.5px;top:57.5px" width="4" height="20" viewBox="0 0 4 20"><rect x="0.5" y="0.5" width="2.2" height="2.2" fill="#3c3c3c"/><rect x="0.5" y="5.7" width="2.2" height="2.2" fill="#3c3c3c"/><rect x="0.5" y="10.9" width="2.2" height="2.2" fill="#3c3c3c"/><rect x="0.5" y="16.1" width="2.2" height="2.2" fill="#3c3c3c"/></svg>
<svg style="left:116px;top:58px" width="18" height="18" viewBox="0 0 18 18"><path d="M1 4 H9" stroke="#101080" stroke-width="2"/><path d="M8 0.5 L12 4 L8 7.5 Z" fill="#101080"/><rect x="5.5" y="6.5" width="11" height="10" fill="#fff" stroke="#2a50a0" stroke-width="1.4"/><rect x="7" y="9" width="8" height="2.5" fill="#e07090"/><rect x="7" y="12.5" width="8" height="2.5" fill="#50b0d8"/></svg>
<svg style="left:144.5px;top:72px" width="9" height="9" viewBox="0 0 9 9"><rect x="0.5" y="0.5" width="7" height="1.3" fill="#444"/><path d="M0.5 3.2 H7.5 L4 7.6 Z" fill="#444"/></svg>
<svg style="left:163.5px;top:57.5px" width="4" height="20" viewBox="0 0 4 20"><rect x="0.5" y="0.5" width="2.2" height="2.2" fill="#3c3c3c"/><rect x="0.5" y="5.7" width="2.2" height="2.2" fill="#3c3c3c"/><rect x="0.5" y="10.9" width="2.2" height="2.2" fill="#3c3c3c"/><rect x="0.5" y="16.1" width="2.2" height="2.2" fill="#3c3c3c"/></svg>
<svg style="left:172px;top:56px" width="20" height="21" viewBox="0 0 20 21"><path d="M2.5 1.5 H12 L17.5 7 V19.5 H2.5 Z" fill="#f4f6fa" stroke="#c8ccd4" stroke-width="1"/><path d="M3 8 L10 13 L3 18 Z" fill="#b8e0b8"/></svg>
<svg style="left:200px;top:56px" width="18" height="21" viewBox="0 0 18 21"><path d="M1.5 1.5 H11 L16.5 7 V19.5 H1.5 Z" fill="#f4f6fa" stroke="#c8ccd4" stroke-width="1"/><path d="M5 8 H13 M5 12 H13 M5 16 H11" stroke="#d0d4da" stroke-width="1"/></svg>
<svg style="left:224px;top:55px" width="2" height="24" viewBox="0 0 2 24"><rect x="0" y="0" width="1" height="24" fill="#a5a9b3"/></svg>
<svg style="left:231px;top:56px" width="24" height="22" viewBox="0 0 24 22"><path d="M3 3 L20 19" stroke="#cfd2d8" stroke-width="4" stroke-linecap="round"/><circle cx="4" cy="4" r="3" fill="none" stroke="#cfd2d8" stroke-width="2"/><path d="M3 13 L9 17 L3 21 Z" fill="#c8e4c8"/></svg>
<svg style="left:260px;top:72px" width="9" height="9" viewBox="0 0 9 9"><rect x="0.5" y="0.5" width="7" height="1.3" fill="#444"/><path d="M0.5 3.2 H7.5 L4 7.6 Z" fill="#444"/></svg>
<svg style="left:279.5px;top:57.5px" width="4" height="20" viewBox="0 0 4 20"><rect x="0.5" y="0.5" width="2.2" height="2.2" fill="#3c3c3c"/><rect x="0.5" y="5.7" width="2.2" height="2.2" fill="#3c3c3c"/><rect x="0.5" y="10.9" width="2.2" height="2.2" fill="#3c3c3c"/><rect x="0.5" y="16.1" width="2.2" height="2.2" fill="#3c3c3c"/></svg>
<svg style="left:288px;top:57px" width="20" height="20" viewBox="0 0 20 20"><path d="M1.5 1.5 H14 L18.5 6 V18.5 H1.5 Z" fill="#dfe8f8" stroke="#6a80c0" stroke-width="1"/><rect x="3" y="5" width="12" height="8" fill="#f5a623"/><circle cx="9" cy="9" r="4" fill="#f08010"/><path d="M3 15 H17" stroke="#8aa0d8" stroke-width="2"/></svg>
<svg style="left:314px;top:56px" width="21" height="22" viewBox="0 0 21 22"><path d="M4 3 H17" stroke="#222" stroke-width="1.3"/><path d="M4 0.5 V5.5 M17 0.5 V5.5" stroke="#222" stroke-width="1.6"/><rect x="1.5" y="7.5" width="7" height="13" fill="#dde4ea" stroke="#607080" stroke-width="1.2"/><rect x="12.5" y="7.5" width="7" height="13" fill="#dde4ea" stroke="#607080" stroke-width="1.2"/><path d="M3.5 11 H6.5 M3.5 14 H6.5 M3.5 17 H6.5 M14.5 11 H17.5 M14.5 14 H17.5 M14.5 17 H17.5" stroke="#607080" stroke-width="1"/></svg>
<svg style="left:341px;top:56px" width="22" height="22" viewBox="0 0 22 22"><rect x="3.5" y="1.5" width="14" height="13" fill="#c8dcf0" stroke="#405880" stroke-width="1"/><path d="M1 2 L6 6 L1 10 Z" fill="#40a040"/><path d="M14 11 V21 M9 16 H19" stroke="#30a030" stroke-width="4"/></svg>
<svg style="left:371px;top:72px" width="9" height="9" viewBox="0 0 9 9"><rect x="0.5" y="0.5" width="7" height="1.3" fill="#444"/><path d="M0.5 3.2 H7.5 L4 7.6 Z" fill="#444"/></svg>
<svg style="left:390.0px;top:57.5px" width="4" height="20" viewBox="0 0 4 20"><rect x="0.5" y="0.5" width="2.2" height="2.2" fill="#3c3c3c"/><rect x="0.5" y="5.7" width="2.2" height="2.2" fill="#3c3c3c"/><rect x="0.5" y="10.9" width="2.2" height="2.2" fill="#3c3c3c"/><rect x="0.5" y="16.1" width="2.2" height="2.2" fill="#3c3c3c"/></svg>
<svg style="left:398px;top:57px" width="21" height="20" viewBox="0 0 21 20"><path d="M1.5 1.5 H15 L19.5 6 V18.5 H1.5 Z" fill="#c8d8f0" stroke="#7f90b8" stroke-width="1"/><rect x="1" y="7" width="19" height="6" rx="2" fill="#f5b030"/><path d="M1 10 H20" stroke="#f8d040" stroke-width="2"/><path d="M2 15.5 H19" stroke="#90a8d8" stroke-width="2"/></svg>
<svg style="left:426px;top:57px" width="18" height="19" viewBox="0 0 18 19"><rect x="0.5" y="0.5" width="17" height="18" fill="#e0e0e4" stroke="#808080" stroke-width="1"/><rect x="2" y="2" width="4" height="4" fill="#f0b8c0"/><rect x="8" y="3" width="8" height="2" fill="#555"/><path d="M3 9 V17 M9 9 V17 M15 9 V17" stroke="#606060" stroke-width="1.5" stroke-dasharray="2 1.5"/></svg>
<svg style="left:452px;top:57px" width="19" height="19" viewBox="0 0 19 19"><rect x="0.5" y="0.5" width="18" height="18" fill="#e8f0d0" stroke="#707070" stroke-width="1"/><path d="M9.5 0.5 V18.5 M0.5 9.5 H18.5" stroke="#707070" stroke-width="1"/><path d="M3 7 L5 4 L7 7 Z M12 4 V8 H16 M3 12 V16 H7 M12 16 L14 12 L16 16 Z" fill="#60a030" stroke="#60a030" stroke-width="1"/></svg>
<svg style="left:480px;top:58px" width="19" height="17" viewBox="0 0 19 17"><rect x="0" y="0" width="2" height="17" fill="#3f8a2a"/><rect x="2" y="1.5" width="13" height="4" fill="#7cc04a"/><rect x="2" y="6.5" width="17" height="4" fill="#7cc04a"/><rect x="2" y="11.5" width="11" height="4" fill="#7cc04a"/></svg>
<svg style="left:507px;top:57px" width="19" height="18" viewBox="0 0 19 18"><path d="M1 1 V17 H19" stroke="#304050" stroke-width="1.6" fill="none"/><text x="4" y="8" font-family="Liberation Serif" font-weight="bold" font-size="9" fill="#111">y</text><text x="11.5" y="16" font-family="Liberation Serif" font-weight="bold" font-size="9" fill="#111">x</text></svg>
<svg style="left:533px;top:57px" width="20" height="18" viewBox="0 0 20 18"><rect x="9" y="4" width="10" height="10" fill="#70b040"/><path d="M1 2 L9 9 M1 9 H9 M1 16 L9 9" stroke="#8090a0" stroke-width="1.2"/></svg>
<svg style="left:562px;top:56px" width="20" height="21" viewBox="0 0 20 21"><rect x="1.5" y="2.5" width="8" height="17" fill="none" stroke="#d8dbe0" stroke-width="1"/><path d="M6 17 L18 4" stroke="#e4e0d8" stroke-width="3"/></svg>
<svg style="left:587.5px;top:72px" width="9" height="9" viewBox="0 0 9 9"><rect x="0.5" y="0.5" width="7" height="1.3" fill="#444"/><path d="M0.5 3.2 H7.5 L4 7.6 Z" fill="#444"/></svg>
<svg style="left:608.0px;top:57.5px" width="4" height="20" viewBox="0 0 4 20"><rect x="0.5" y="0.5" width="2.2" height="2.2" fill="#3c3c3c"/><rect x="0.5" y="5.7" width="2.2" height="2.2" fill="#3c3c3c"/><rect x="0.5" y="10.9" width="2.2" height="2.2" fill="#3c3c3c"/><rect x="0.5" y="16.1" width="2.2" height="2.2" fill="#3c3c3c"/></svg>
<div style="position:absolute;left:613px;top:54px;width:25px;height:25px;background:#bcd4f2;"></div>
<svg style="left:618px;top:57px" width="16" height="20" viewBox="0 0 16 20"><path d="M2 1 L2 15 L5.5 11.5 L8.5 18 L11 17 L8 10.5 L13 10.5 Z" fill="#fff" stroke="#2050a0" stroke-width="1.2" stroke-linejoin="round"/></svg>
<svg style="left:645px;top:56px" width="15" height="21" viewBox="0 0 15 21"><path d="M3 6 C3 1.5 12 1.5 12 6.5 C12 9.5 8 10 8 13" stroke="#2f5fbf" stroke-width="3" fill="none"/><circle cx="8" cy="17.5" r="2" fill="#2f5fbf"/></svg>
<svg style="left:670px;top:57px" width="18" height="18" viewBox="0 0 18 18"><path d="M6.5 1.5 H11.5 V6.5 H16.5 V11.5 H11.5 V16.5 H6.5 V11.5 H1.5 V6.5 H6.5 Z" fill="#eef4ff" stroke="#2f5fbf" stroke-width="1.6"/></svg>
<svg style="left:697px;top:57px" width="18" height="18" viewBox="0 0 18 18"><circle cx="9" cy="9" r="7.8" fill="#e6eefc" stroke="#2f5fbf" stroke-width="1.6"/><circle cx="9" cy="9" r="4" fill="none" stroke="#2f5fbf" stroke-width="1.2"/><path d="M9 1 V17 M1 9 H17" stroke="#2f5fbf" stroke-width="1"/></svg>
<svg style="left:722.5px;top:55px" width="2" height="24" viewBox="0 0 2 24"><rect x="0" y="0" width="1" height="24" fill="#a5a9b3"/></svg>
<svg style="left:729px;top:56px" width="22" height="22" viewBox="0 0 22 22"><path d="M5 12 V5 C5 3.5 7.5 3.5 7.5 5 V10 V3 C7.5 1.5 10 1.5 10 3 V10 V3.5 C10 2 12.5 2 12.5 3.5 V10 V5 C12.5 3.5 15 3.5 15 5 V14 C15 18 12.5 20 9.5 20 C7 20 5.5 18.5 4 16 L1.5 11.5 C1 10 3 9 4 10.5 Z" fill="#fff" stroke="#333" stroke-width="1.1"/></svg>
<svg style="left:758px;top:56px" width="19" height="20" viewBox="0 0 19 20"><path d="M11 8 L17 2" stroke="#c08020" stroke-width="3"/><path d="M2 15 C2 9 8 6 12 9 C14 12 9 17 3 17 Z" fill="#3d78d8"/></svg>
<svg style="left:785px;top:57px" width="18" height="19" viewBox="0 0 18 19"><ellipse cx="11" cy="7" rx="6.5" ry="5" fill="none" stroke="#2f5fbf" stroke-width="1.8"/><path d="M7 11 L3 18" stroke="#2f5fbf" stroke-width="2"/></svg>
<svg style="left:812px;top:57px" width="19" height="20" viewBox="0 0 19 20"><circle cx="7" cy="7" r="5.5" fill="#eef4ff" stroke="#3a5a90" stroke-width="1.6"/><path d="M11 11 L17.5 18" stroke="#c08030" stroke-width="3.2"/></svg>
<svg style="left:840px;top:58px" width="16" height="16" viewBox="0 0 16 16"><path d="M8 0 V16 M0 8 H16" stroke="#2f5fbf" stroke-width="2.6"/></svg>
<svg style="left:864.5px;top:55px" width="2" height="24" viewBox="0 0 2 24"><rect x="0" y="0" width="1" height="24" fill="#a5a9b3"/></svg>
<svg style="left:870px;top:57px" width="21" height="19" viewBox="0 0 21 19"><rect x="1" y="1" width="19" height="17" fill="#eef2fa" stroke="#3a5aa0" stroke-width="1.5"/><text x="4" y="10" font-family="Liberation Serif" font-weight="bold" font-size="10" fill="#203870">T</text><path d="M11 14 H18" stroke="#90a8d8" stroke-width="1"/></svg>
<svg style="left:898px;top:57px" width="19" height="19" viewBox="0 0 19 19"><path d="M1 3 H16 M1 8 H16 M1 13 H14" stroke="#1c3c90" stroke-width="2.4"/><path d="M14 10 L18.5 13 L14 16 Z" fill="#1c3c90"/></svg>
<svg style="left:925px;top:57px" width="19" height="19" viewBox="0 0 19 19"><path d="M3 1.5 H11 C13 6 18 6 17 11 L14 17.5 H2 Z" fill="#fff" stroke="#2f4fa0" stroke-width="1.4" stroke-linejoin="round"/></svg>
<svg style="left:952px;top:58px" width="21" height="16" viewBox="0 0 21 16"><ellipse cx="10.5" cy="8" rx="9.5" ry="6" fill="#fff" stroke="#2f4fa0" stroke-width="1.4"/></svg>
<svg style="left:979.5px;top:72px" width="9" height="9" viewBox="0 0 9 9"><rect x="0.5" y="0.5" width="7" height="1.3" fill="#444"/><path d="M0.5 3.2 H7.5 L4 7.6 Z" fill="#444"/></svg>
<svg style="left:1000.0px;top:57.5px" width="4" height="20" viewBox="0 0 4 20"><rect x="0.5" y="0.5" width="2.2" height="2.2" fill="#3c3c3c"/><rect x="0.5" y="5.7" width="2.2" height="2.2" fill="#3c3c3c"/><rect x="0.5" y="10.9" width="2.2" height="2.2" fill="#3c3c3c"/><rect x="0.5" y="16.1" width="2.2" height="2.2" fill="#3c3c3c"/></svg>
<svg style="left:1007px;top:56px" width="20" height="21" viewBox="0 0 20 21"><rect x="1" y="7" width="18" height="13" fill="#c8dcf4" stroke="#2a60b8" stroke-width="1.3"/><rect x="2" y="1" width="7" height="7" fill="#f0c040"/><path d="M10 4 H17 V8" stroke="#2a60b8" stroke-width="1.2" fill="none"/><path d="M6 11 V19 M11 11 V19 M2 14 H18" stroke="#5080c8" stroke-width="1"/><circle cx="12" cy="12" r="1.5" fill="#111"/></svg>
<svg style="left:1034px;top:56px" width="22" height="21" viewBox="0 0 22 21"><path d="M5.5 5.5 H14 L19.5 11 V19.5 H5.5 Z" fill="#e8f0fa" stroke="#5a7aa8" stroke-width="1.2"/><path d="M1 2 L5 6 M5 1 V4 M1 5 H4" stroke="#e8c030" stroke-width="1.6"/><path d="M2 12 H12" stroke="#9098a8" stroke-width="2"/></svg>
<svg style="left:1062px;top:56px" width="21" height="21" viewBox="0 0 21 21"><path d="M1 8 H18 L16 19 H1 Z" fill="#f0c040" stroke="#b08020" stroke-width="1"/><path d="M1 8 V5 H7 L9 7 H15" fill="#f8d868" stroke="#b08020" stroke-width="1"/><path d="M12 5 C14 1 18 1 19 4" stroke="#4080c0" stroke-width="1.5" fill="none"/></svg>
<svg style="left:1089px;top:56px" width="20" height="21" viewBox="0 0 20 21"><rect x="1" y="2" width="12" height="15" fill="#d4dae4" stroke="#707880" stroke-width="1"/><rect x="8" y="9" width="11" height="11" fill="#3a5090"/><rect x="10" y="10" width="7" height="4" fill="#e8eef8"/></svg>
<svg style="left:1116px;top:56px" width="20" height="21" viewBox="0 0 20 21"><rect x="1" y="1" width="18" height="19" fill="#4848a8" rx="1"/><rect x="4" y="2" width="12" height="8" fill="#e8ecf8"/><rect x="6" y="13" width="8" height="6" fill="#c0c8e8"/></svg>
<svg style="left:1142.5px;top:55px" width="2" height="24" viewBox="0 0 2 24"><rect x="0" y="0" width="1" height="24" fill="#a5a9b3"/></svg>
<svg style="left:1152px;top:56px" width="15" height="21" viewBox="0 0 15 21"><path d="M4 1 L9 14 M11 1 L6 14" stroke="#c8ccd8" stroke-width="1.8"/><circle cx="4.5" cy="17" r="2.5" fill="none" stroke="#c8ccd8" stroke-width="1.5"/><circle cx="10.5" cy="17" r="2.5" fill="none" stroke="#c8ccd8" stroke-width="1.5"/></svg>
<svg style="left:1176px;top:57px" width="20" height="19" viewBox="0 0 20 19"><rect x="1" y="1" width="11" height="12" fill="#e4ecfa" stroke="#4a6ab0" stroke-width="1"/><rect x="8" y="6" width="11" height="12" fill="#c8daf4" stroke="#3a5aa8" stroke-width="1.2"/><path d="M10 10 H17 M10 13 H17" stroke="#3a5aa8" stroke-width="1"/></svg>
<svg style="left:1203px;top:56px" width="21" height="21" viewBox="0 0 21 21"><rect x="1" y="4" width="13" height="16" fill="#f0c030" stroke="#a07010" stroke-width="1"/><rect x="4" y="1" width="7" height="5" fill="#d8d8d8" stroke="#606060" stroke-width="1"/><rect x="9" y="10" width="11" height="10" fill="#dde4ee" stroke="#505860" stroke-width="1"/></svg>
<svg style="left:1228.5px;top:55px" width="2" height="24" viewBox="0 0 2 24"><rect x="0" y="0" width="1" height="24" fill="#a5a9b3"/></svg>
<svg style="left:1235px;top:56px" width="22" height="21" viewBox="0 0 22 21"><rect x="1" y="1" width="15" height="13" fill="#fff" stroke="#404040" stroke-width="1.6"/><path d="M17 4 V16 H4" stroke="#404040" stroke-width="1.4" fill="none"/><path d="M20 7 V19 H7" stroke="#404040" stroke-width="1.4" fill="none"/><rect x="1" y="1" width="15" height="3" fill="#404040"/></svg>
<svg style="left:1262px;top:56px" width="21" height="21" viewBox="0 0 21 21"><rect x="1" y="4" width="17" height="16" fill="#fff" stroke="#404040" stroke-width="1.4"/><path d="M4 9 H15 M4 12 H15 M4 15 H12" stroke="#404040" stroke-width="1.3"/><path d="M17 0.5 L18.5 3.5 L21 4 L18.5 5 L17 8 L15.5 5 L13 4 L15.5 3.5 Z" fill="#505050"/></svg>
<svg style="left:1291px;top:56px" width="20" height="21" viewBox="0 0 20 21"><path d="M1.5 3.5 H9 V20 H1.5 Z M9 20 H14 V12" fill="#fff" stroke="#505050" stroke-width="1.2"/><circle cx="14" cy="6.5" r="5.5" fill="#fff" stroke="#505050" stroke-width="1.3"/><path d="M14 3.5 V6.5 H16.5" stroke="#505050" stroke-width="1.2" fill="none"/><path d="M3.5 9 H7 M3.5 12 H7 M3.5 15 H12" stroke="#808080" stroke-width="1"/></svg>
<svg style="left:1316px;top:58px" width="21" height="18" viewBox="0 0 21 18"><rect x="1" y="1" width="19" height="16" fill="#fff" stroke="#404040" stroke-width="1.5"/><rect x="1" y="1" width="19" height="3" fill="#404040"/><path d="M4 8 H17 M4 11 H17 M4 14 H13" stroke="#505050" stroke-width="1.2"/></svg>
<svg style="left:1344px;top:72px" width="9" height="9" viewBox="0 0 9 9"><rect x="0.5" y="0.5" width="7" height="1.3" fill="#444"/><path d="M0.5 3.2 H7.5 L4 7.6 Z" fill="#444"/></svg>
<svg style="left:29px;top:90px" width="19.0" height="18.0" viewBox="0 0 19 18"><path d="M1.5 1.5 H12 L17.5 7 V16.5 H1.5 Z" fill="#eef3fa" stroke="#b8c4d4" stroke-width="1"/><path d="M0 9 H14 M3 12 H14" stroke="#a8b0c0" stroke-width="1.2"/></svg>
<svg style="left:30px;top:112px" width="19.0" height="20.0" viewBox="0 0 19 20"><rect x="1" y="1" width="13" height="17" fill="#e8e4f0" stroke="#777" stroke-width="1.2"/><path d="M14.5 3 V17" stroke="#3a9a9a" stroke-width="3"/><path d="M14.5 9 V14" stroke="#e0a030" stroke-width="3"/><path d="M4 8 L9 12 M5 7 L6 8" stroke="#2a70b0" stroke-width="1.8"/><path d="M1 18.5 H15" stroke="#888" stroke-width="1.5"/></svg>
<svg style="left:223px;top:90px" width="27.0" height="28.0" viewBox="0 0 27 28"><rect x="8.5" y="9.5" width="16" height="15" fill="#fff" stroke="#666" stroke-width="1.6"/><rect x="5.5" y="6" width="16" height="15" fill="#fff" stroke="#666" stroke-width="1.6"/><rect x="2.5" y="2.5" width="16" height="15" fill="#fff" stroke="#666" stroke-width="1.6"/><rect x="2.5" y="2.5" width="16" height="3" fill="#666"/></svg>
<svg style="left:241px;top:398px" width="24.0" height="24.0" viewBox="0 0 24 24"><rect x="1" y="4" width="20" height="18" fill="#fff" stroke="#555" stroke-width="1.6"/><path d="M4.5 10 H17 M4.5 13.5 H17 M4.5 17 H14" stroke="#555" stroke-width="1.4"/><path d="M19 0.5 L20.5 3.5 L23.5 4 L20.5 5 L19 8.5 L17.5 5 L14.5 4 L17.5 3.5 Z" fill="#666"/></svg>
<svg style="left:226px;top:704px" width="24.0" height="30.0" viewBox="0 0 24 30"><rect x="3.5" y="4.5" width="17" height="22" fill="#fff" stroke="#666" stroke-width="1.3"/><path d="M6 20.5 H17 M6 23 H14" stroke="#666" stroke-width="1.2"/><path d="M6 9 H9 M6 11.5 H9 M6 14 H9" stroke="#999" stroke-width="1"/><circle cx="15.7" cy="10" r="7" fill="#fff" stroke="#666" stroke-width="1.4"/><path d="M14.5 5.5 V11 H18.5" stroke="#444" stroke-width="1.8" fill="none"/></svg>
<svg style="left:185px;top:126px" width="20.0" height="18.0" viewBox="0 0 20 18"><rect x="0.75" y="0.75" width="18" height="16" fill="#eef2fb" stroke="#2f66b8" stroke-width="1.5"/><path d="M1 4 H18 M1 7.5 H18 M1 11 H18" stroke="#e09ab0" stroke-width="1.2"/><path d="M5 1 V17 M9 1 V17 M13 1 V17" stroke="#7aa0d8" stroke-width="1"/><circle cx="13.5" cy="8" r="1.8" fill="#111"/><path d="M13 8 V18 M9 13 H19" stroke="#2a8ad8" stroke-width="1.4"/></svg>
<svg style="left:202px;top:148px" width="19.0" height="17.0" viewBox="0 0 19 17"><rect x="0" y="0" width="2" height="17" fill="#3f7a2a"/><rect x="2" y="1.5" width="12" height="4" fill="#78b848"/><rect x="2" y="6.5" width="16" height="4" fill="#78b848"/><rect x="2" y="11.5" width="10" height="4" fill="#78b848"/></svg>
<svg style="left:202px;top:170px" width="18.0" height="17.0" viewBox="0 0 18 17"><path d="M1 1 V16 H18" stroke="#3a4a5a" stroke-width="1.4" fill="none"/><text x="4.5" y="7.5" font-family="Liberation Serif" font-weight="bold" font-size="8.5" fill="#111">y</text><text x="11" y="14" font-family="Liberation Serif" font-weight="bold" font-size="8.5" fill="#111">x</text></svg>
<svg style="left:201px;top:193px" width="21.0" height="16.0" viewBox="0 0 21 16"><path d="M1 2 C5 6 8 12 12 12 C15 12 17 9 20 8" stroke="#d06060" stroke-width="1.4" fill="none"/><path d="M1 14 C4 10 7 3 12 3 C15 3 17 5 20 8" stroke="#3a80c8" stroke-width="1.4" fill="none"/></svg>
<svg style="left:202px;top:214px" width="19.0" height="18.0" viewBox="0 0 19 18"><path d="M1 17 C7 17 8 15 10 9 C12 3 13 2 18 2" stroke="#404850" stroke-width="1.3" fill="none"/><path d="M1 17 H6 M15 1.5 H18" stroke="#60a050" stroke-width="1.2" stroke-dasharray="1.5 1.5"/></svg>
<svg style="left:201px;top:235px" width="19.0" height="19.0" viewBox="0 0 19 19"><rect x="0.5" y="0.5" width="18" height="18" fill="#eaf2d8" stroke="#7a8070" stroke-width="1"/><path d="M9.5 0.5 V18.5 M0.5 9.5 H18.5" stroke="#7a8070" stroke-width="1"/><path d="M3 7 V4 M5 7 V3 M7 7 V5 M12 8 V4 M14 8 V6 M3 16 V13 M5 16 V12 M12 16 V12 M14 16 V11 M16 16 V13" stroke="#60a030" stroke-width="1.6"/></svg>
<svg style="left:185px;top:432px" width="20.0" height="21.0" viewBox="0 0 20 21"><path d="M2.5 0.5 H15 L17.5 3 V19.5 H2.5 Z" fill="#d8e8f8" stroke="#5a7898" stroke-width="1"/><rect x="3" y="11" width="14" height="8.5" fill="#a8d2f4"/><rect x="0" y="1.5" width="11" height="9" fill="#eef0f8"/><path d="M0 3.5 H11 M0 6.5 H11 M0 9.5 H11" stroke="#b0a8c8" stroke-width="1"/><path d="M4.5 1 V10.5 M7.5 1 V10.5 M10.5 1 V10.5" stroke="#506070" stroke-width="1.1"/><circle cx="11" cy="9" r="1.9" fill="#000"/><path d="M12.5 9.5 V19.5" stroke="#2a6aa8" stroke-width="1.4"/><path d="M7.5 12.5 H19" stroke="#2a80c0" stroke-width="1.6"/><path d="M2.5 19.5 H17.5" stroke="#4a6890" stroke-width="1"/></svg>
<div style="position:absolute;left:0;top:0;width:425px;height:982px;overflow:hidden;">
<svg style="left:185px;top:740px" width="20.0" height="21.0" viewBox="0 0 20 21"><path d="M0.5 0.5 H10.5 V3.5 H14.5 V16.5 H0.5 Z" fill="#50d070" stroke="#1f8a3a" stroke-width="1.2" stroke-linejoin="round"/><path d="M3 4 H9 M3 8 H12 M3 12 H9" stroke="#a8f0b0" stroke-width="1.6"/><circle cx="9.5" cy="7" r="1.9" fill="#000"/><path d="M6 11 C10 10 14 10.5 19 10.5 M14.5 11 C13 14 12 16 10.5 19" stroke="#1a6ab0" stroke-width="1.6" fill="none"/></svg>
<svg style="left:185px;top:761px" width="20.0" height="21.0" viewBox="0 0 20 21"><path d="M2.5 0.5 H15 L17.5 3 V19.5 H2.5 Z" fill="#d8e8f8" stroke="#5a7898" stroke-width="1"/><rect x="3" y="11" width="14" height="8.5" fill="#a8d2f4"/><rect x="0" y="1.5" width="11" height="9" fill="#eef0f8"/><path d="M0 3.5 H11 M0 6.5 H11 M0 9.5 H11" stroke="#b0a8c8" stroke-width="1"/><path d="M4.5 1 V10.5 M7.5 1 V10.5 M10.5 1 V10.5" stroke="#506070" stroke-width="1.1"/><circle cx="11" cy="9" r="1.9" fill="#000"/><path d="M12.5 9.5 V19.5" stroke="#2a6aa8" stroke-width="1.4"/><path d="M7.5 12.5 H19" stroke="#2a80c0" stroke-width="1.6"/><path d="M2.5 19.5 H17.5" stroke="#4a6890" stroke-width="1"/></svg>
<svg style="left:185px;top:783px" width="20.0" height="20.0" viewBox="0 0 20 20"><rect x="3.5" y="0.5" width="14.5" height="18.5" fill="#d8ecfa" stroke="#50708c" stroke-width="1"/><rect x="7" y="2.5" width="8" height="8" fill="#60d070"/><rect x="7" y="11" width="10" height="7.5" fill="#8ccaf4"/><path d="M1.8 1.5 V18" stroke="#d8c840" stroke-width="3"/><path d="M2.5 3 H6 M2.5 6 H6 M2.5 9 H6 M2.5 12 H6 M2.5 15 H6" stroke="#505050" stroke-width="1.1"/><circle cx="11" cy="9" r="1.9" fill="#000"/><path d="M6 12.5 H19" stroke="#2070b0" stroke-width="1.6"/><path d="M13 10 V19" stroke="#2a60a0" stroke-width="1.3"/></svg>
<svg style="left:185px;top:805px" width="20.0" height="21.0" viewBox="0 0 20 21"><path d="M2.5 0.5 H15 L17.5 3 V19.5 H2.5 Z" fill="#d8e8f8" stroke="#5a7898" stroke-width="1"/><rect x="3" y="11" width="14" height="8.5" fill="#a8d2f4"/><rect x="0" y="1.5" width="11" height="9" fill="#eef0f8"/><path d="M0 3.5 H11 M0 6.5 H11 M0 9.5 H11" stroke="#b0a8c8" stroke-width="1"/><path d="M4.5 1 V10.5 M7.5 1 V10.5 M10.5 1 V10.5" stroke="#506070" stroke-width="1.1"/><circle cx="11" cy="9" r="1.9" fill="#000"/><path d="M12.5 9.5 V19.5" stroke="#2a6aa8" stroke-width="1.4"/><path d="M7.5 12.5 H19" stroke="#2a80c0" stroke-width="1.6"/><path d="M2.5 19.5 H17.5" stroke="#4a6890" stroke-width="1"/></svg>
<svg style="left:185px;top:827px" width="20.0" height="20.0" viewBox="0 0 20 20"><rect x="3.5" y="0.5" width="14.5" height="18.5" fill="#d8ecfa" stroke="#50708c" stroke-width="1"/><rect x="7" y="2.5" width="8" height="8" fill="#60d070"/><rect x="7" y="11" width="10" height="7.5" fill="#8ccaf4"/><path d="M1.8 1.5 V18" stroke="#d8c840" stroke-width="3"/><path d="M2.5 3 H6 M2.5 6 H6 M2.5 9 H6 M2.5 12 H6 M2.5 15 H6" stroke="#505050" stroke-width="1.1"/><circle cx="11" cy="9" r="1.9" fill="#000"/><path d="M6 12.5 H19" stroke="#2070b0" stroke-width="1.6"/><path d="M13 10 V19" stroke="#2a60a0" stroke-width="1.3"/></svg>
<svg style="left:185px;top:849px" width="20.0" height="20.0" viewBox="0 0 20 20"><rect x="3.5" y="0.5" width="14.5" height="18.5" fill="#d8ecfa" stroke="#50708c" stroke-width="1"/><rect x="7" y="2.5" width="8" height="8" fill="#60d070"/><rect x="7" y="11" width="10" height="7.5" fill="#8ccaf4"/><path d="M1.8 1.5 V18" stroke="#d8c840" stroke-width="3"/><path d="M2.5 3 H6 M2.5 6 H6 M2.5 9 H6 M2.5 12 H6 M2.5 15 H6" stroke="#505050" stroke-width="1.1"/><circle cx="11" cy="9" r="1.9" fill="#000"/><path d="M6 12.5 H19" stroke="#2070b0" stroke-width="1.6"/><path d="M13 10 V19" stroke="#2a60a0" stroke-width="1.3"/></svg>
<svg style="left:185px;top:871px" width="20.0" height="20.0" viewBox="0 0 20 20"><rect x="3.5" y="0.5" width="14.5" height="18.5" fill="#d8ecfa" stroke="#50708c" stroke-width="1"/><rect x="7" y="2.5" width="8" height="8" fill="#60d070"/><rect x="7" y="11" width="10" height="7.5" fill="#8ccaf4"/><path d="M1.8 1.5 V18" stroke="#d8c840" stroke-width="3"/><path d="M2.5 3 H6 M2.5 6 H6 M2.5 9 H6 M2.5 12 H6 M2.5 15 H6" stroke="#505050" stroke-width="1.1"/><circle cx="11" cy="9" r="1.9" fill="#000"/><path d="M6 12.5 H19" stroke="#2070b0" stroke-width="1.6"/><path d="M13 10 V19" stroke="#2a60a0" stroke-width="1.3"/></svg>
<svg style="left:185px;top:894px" width="20.0" height="21.0" viewBox="0 0 20 21"><path d="M0.5 0.5 H10.5 V3.5 H14.5 V16.5 H0.5 Z" fill="#50d070" stroke="#1f8a3a" stroke-width="1.2" stroke-linejoin="round"/><path d="M3 4 H9 M3 8 H12 M3 12 H9" stroke="#a8f0b0" stroke-width="1.6"/><circle cx="9.5" cy="7" r="1.9" fill="#000"/><path d="M6 11 C10 10 14 10.5 19 10.5 M14.5 11 C13 14 12 16 10.5 19" stroke="#1a6ab0" stroke-width="1.6" fill="none"/></svg>
<svg style="left:185px;top:915px" width="20.0" height="21.0" viewBox="0 0 20 21"><path d="M2.5 0.5 H15 L17.5 3 V19.5 H2.5 Z" fill="#d8e8f8" stroke="#5a7898" stroke-width="1"/><rect x="3" y="11" width="14" height="8.5" fill="#a8d2f4"/><rect x="0" y="1.5" width="11" height="9" fill="#eef0f8"/><path d="M0 3.5 H11 M0 6.5 H11 M0 9.5 H11" stroke="#b0a8c8" stroke-width="1"/><path d="M4.5 1 V10.5 M7.5 1 V10.5 M10.5 1 V10.5" stroke="#506070" stroke-width="1.1"/><circle cx="11" cy="9" r="1.9" fill="#000"/><path d="M12.5 9.5 V19.5" stroke="#2a6aa8" stroke-width="1.4"/><path d="M7.5 12.5 H19" stroke="#2a80c0" stroke-width="1.6"/><path d="M2.5 19.5 H17.5" stroke="#4a6890" stroke-width="1"/></svg>
<svg style="left:185px;top:937px" width="20.0" height="21.0" viewBox="0 0 20 21"><path d="M2.5 0.5 H15 L17.5 3 V19.5 H2.5 Z" fill="#d8e8f8" stroke="#5a7898" stroke-width="1"/><rect x="3" y="11" width="14" height="8.5" fill="#a8d2f4"/><rect x="0" y="1.5" width="11" height="9" fill="#eef0f8"/><path d="M0 3.5 H11 M0 6.5 H11 M0 9.5 H11" stroke="#b0a8c8" stroke-width="1"/><path d="M4.5 1 V10.5 M7.5 1 V10.5 M10.5 1 V10.5" stroke="#506070" stroke-width="1.1"/><circle cx="11" cy="9" r="1.9" fill="#000"/><path d="M12.5 9.5 V19.5" stroke="#2a6aa8" stroke-width="1.4"/><path d="M7.5 12.5 H19" stroke="#2a80c0" stroke-width="1.6"/><path d="M2.5 19.5 H17.5" stroke="#4a6890" stroke-width="1"/></svg>
<svg style="left:185px;top:959px" width="20.0" height="21.0" viewBox="0 0 20 21"><path d="M2.5 0.5 H15 L17.5 3 V19.5 H2.5 Z" fill="#d8e8f8" stroke="#5a7898" stroke-width="1"/><rect x="3" y="11" width="14" height="8.5" fill="#a8d2f4"/><rect x="0" y="1.5" width="11" height="9" fill="#eef0f8"/><path d="M0 3.5 H11 M0 6.5 H11 M0 9.5 H11" stroke="#b0a8c8" stroke-width="1"/><path d="M4.5 1 V10.5 M7.5 1 V10.5 M10.5 1 V10.5" stroke="#506070" stroke-width="1.1"/><circle cx="11" cy="9" r="1.9" fill="#000"/><path d="M12.5 9.5 V19.5" stroke="#2a6aa8" stroke-width="1.4"/><path d="M7.5 12.5 H19" stroke="#2a80c0" stroke-width="1.6"/><path d="M2.5 19.5 H17.5" stroke="#4a6890" stroke-width="1"/></svg>
</div>
<svg style="left:452px;top:94px" width="22.4" height="23.5" viewBox="0 0 20 21"><path d="M2.5 0.5 H15 L17.5 3 V19.5 H2.5 Z" fill="#d8e8f8" stroke="#5a7898" stroke-width="1"/><rect x="3" y="11" width="14" height="8.5" fill="#a8d2f4"/><rect x="0" y="1.5" width="11" height="9" fill="#eef0f8"/><path d="M0 3.5 H11 M0 6.5 H11 M0 9.5 H11" stroke="#b0a8c8" stroke-width="1"/><path d="M4.5 1 V10.5 M7.5 1 V10.5 M10.5 1 V10.5" stroke="#506070" stroke-width="1.1"/><circle cx="11" cy="9" r="1.9" fill="#000"/><path d="M12.5 9.5 V19.5" stroke="#2a6aa8" stroke-width="1.4"/><path d="M7.5 12.5 H19" stroke="#2a80c0" stroke-width="1.6"/><path d="M2.5 19.5 H17.5" stroke="#4a6890" stroke-width="1"/></svg>
<svg style="left:582px;top:94px" width="21.0" height="24.0" viewBox="0 0 21 24"><rect x="0" y="0" width="2" height="24" fill="#334"/><path d="M2 2 H13 V6 H18 V11 H20 V14 H17 V18 H13 V22 H2 Z" fill="#8cc060"/><path d="M2 6 H13 M2 10 H18 M2 14 H17 M2 18 H13" stroke="#a8d080" stroke-width="1"/></svg>
<svg style="left:784px;top:94px" width="24.0" height="24.0" viewBox="0 0 24 24"><path d="M2 2 V23 H23" stroke="#3a4a5a" stroke-width="1.8" fill="none"/><path d="M2 2 H23 V23" stroke="#c8c8cc" stroke-width="1" fill="#f4f6fa"/><text x="5.5" y="10" font-family="Liberation Serif" font-style="italic" font-weight="bold" font-size="9" fill="#111">y</text><text x="14" y="21" font-family="Liberation Serif" font-style="italic" font-weight="bold" font-size="9" fill="#111">x</text></svg>
<svg style="left:1085px;top:94px" width="24.0" height="24.0" viewBox="0 0 24 24"><rect x="3" y="2" width="20" height="21" fill="#f4f8fc"/><path d="M3 2 V23 H24" stroke="#3a4a5a" stroke-width="1.8" fill="none"/><path d="M5 8 C9 13 12 16 15 16 C18 16 20 13 23 12" stroke="#a0a0a8" stroke-width="1.6" fill="none"/><path d="M5 17 C9 12 12 7 16 7 C19 7 21 10 23 11" stroke="#808890" stroke-width="1.6" fill="none"/></svg>
<svg style="left:1388px;top:93px" width="24.0" height="24.0" viewBox="0 0 24 24"><rect x="2" y="3" width="20" height="21" fill="#f8fbff"/><path d="M2 3 V24 H22" stroke="#1a2838" stroke-width="2" fill="none"/><path d="M2 3 H22 V24" stroke="#c8ccd4" stroke-width="1" fill="none"/><path d="M3 20.5 C9 20.5 11 18 13 12 C15 6 16 6 22 6" stroke="#505860" stroke-width="1.3" fill="none"/></svg>
<svg style="left:1686px;top:92px" width="24.0" height="24.0" viewBox="0 0 24 24"><rect x="3" y="4" width="20" height="20" fill="#eef6e4"/><path d="M3 9.5 H23 M3 16.5 H23 M3 23.5 H23 M12.5 4 V24" stroke="#4a5a70" stroke-width="1"/><path d="M5 9 V6 M7 9 V5 M9 9 V6 M11 9 V7 M14 9 V5 M16 9 V6 M18 9 V5 M20 9 V7 M5 16 V12 M8 16 V13 M10 16 V11 M15 16 V12 M18 16 V13 M20 16 V12 M5 23 V19 M7 23 V20 M10 23 V19 M14 23 V18 M17 23 V20 M20 23 V19" stroke="#88b070" stroke-width="1.4"/></svg>
</body></html>
